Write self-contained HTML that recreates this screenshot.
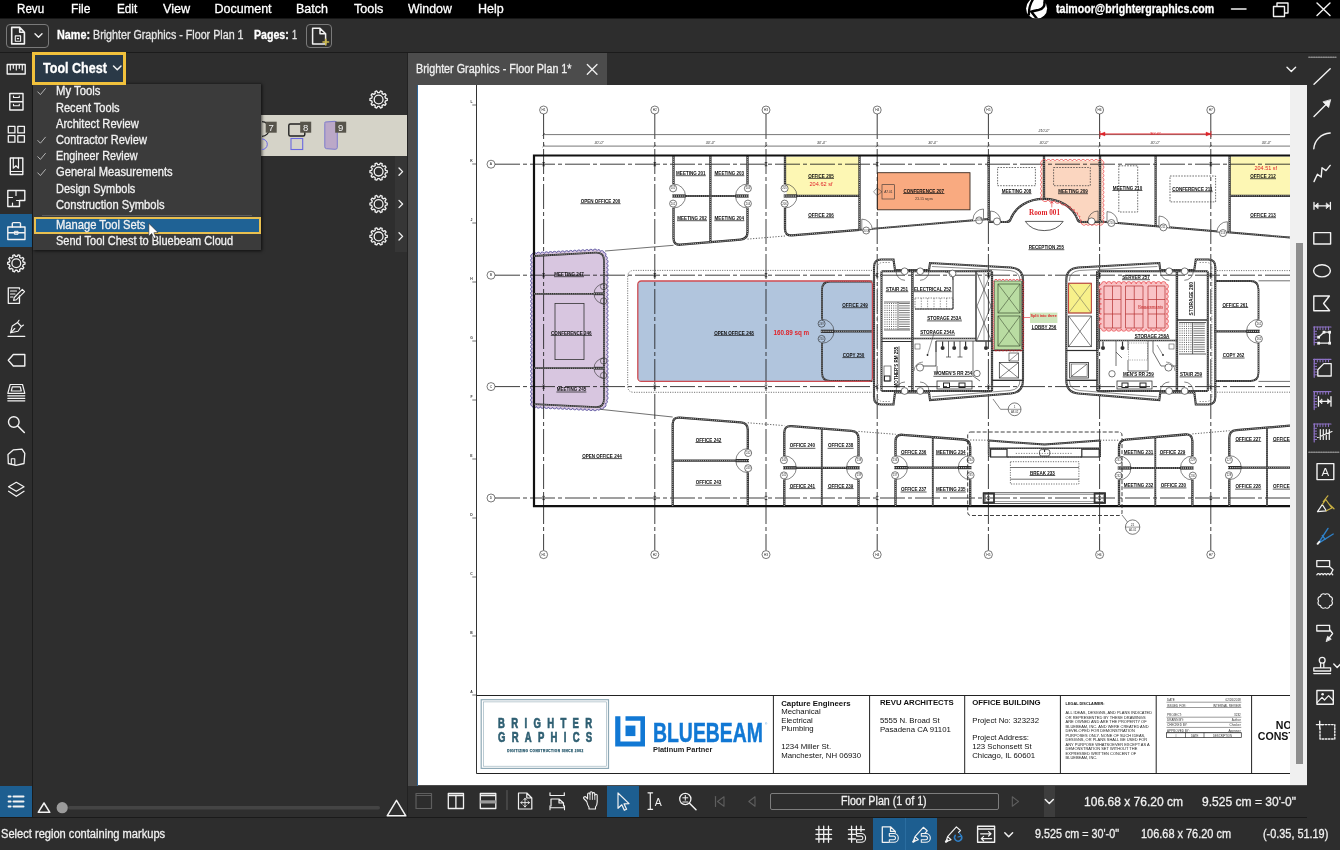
<!DOCTYPE html>
<html lang="en"><head><meta charset="utf-8"><title>Bluebeam Revu - Brighter Graphics - Floor Plan 1</title>
<style>
html,body{margin:0;padding:0;background:#2d2d2d}
body{width:1340px;height:850px;position:relative;overflow:hidden;font-family:"Liberation Sans",sans-serif}
.abs{position:absolute;box-sizing:content-box}
.t{position:absolute;white-space:nowrap;transform-origin:0 50%;-webkit-text-stroke:0.3px currentColor}
svg{position:absolute;left:0;top:0;overflow:visible}
svg text{font-family:"Liberation Sans",sans-serif}
svg text.serif{font-family:"Liberation Serif",serif}
#app{position:absolute;left:0;top:0;width:1340px;height:850px;will-change:transform}
</style></head><body>
<div id="app">
<div id="menubar" class="abs" style="left:0;top:0;width:1340px;height:18px;background:#000"></div>
<div class="abs" style="left:0;top:18px;width:1340px;height:1px;background:#171717"></div>
<div id="toolbar" class="abs" style="left:0;top:19px;width:1340px;height:33px;background:#2d2d2d"></div>
<div class="abs" style="left:0;top:52px;width:1340px;height:1px;background:#1b1b1b"></div>
<div id="leftstrip" class="abs" style="left:0;top:53px;width:32px;height:765px;background:#2d2d2d"></div>
<div class="abs" style="left:32px;top:53px;width:1px;height:765px;background:#1c1c1c"></div>
<div class="abs" style="left:0;top:214px;width:32px;height:33px;background:#1d5e90"></div>
<div class="abs" style="left:0;top:786px;width:32px;height:32px;background:#1d5e90"></div>
<div id="panel" class="abs" style="left:33px;top:53px;width:375px;height:765px;background:#2e2e2e"></div>
<div class="abs" style="left:395px;top:156px;width:12px;height:96px;background:#363636"></div>
<div class="abs" style="left:33px;top:115px;width:374px;height:41px;background:#d5d3c8"></div>
<div class="abs" style="left:407px;top:53px;width:1px;height:765px;background:#222"></div>
<div id="tabbar" class="abs" style="left:408px;top:53px;width:899px;height:32px;background:#2d2d2d"></div>
<div id="tab" class="abs" style="left:408px;top:53px;width:199px;height:32px;background:#4c4c4c"></div>
<div id="docbg" class="abs" style="left:408px;top:85px;width:899px;height:701px;background:#4c4c4c"></div>
<div id="page" class="abs" style="left:418px;top:85px;width:872px;height:700px;background:#fff"></div>
<div class="abs" style="left:416.5px;top:85px;width:1.5px;height:701px;background:#2f6698"></div>
<div id="vscroll" class="abs" style="left:1290px;top:85px;width:17px;height:700px;background:#f0f0f0"></div>
<div class="abs" style="left:1296px;top:243px;width:7px;height:521px;background:#8e8e8e"></div>
<div id="righttools" class="abs" style="left:1307px;top:53px;width:33px;height:765px;background:#2d2d2d"></div>
<div id="navbar" class="abs" style="left:408px;top:786px;width:899px;height:31px;background:#2d2d2d"></div>
<div class="abs" style="left:607px;top:786px;width:32px;height:31px;background:#1d5e90"></div>
<div class="abs" style="left:1044px;top:786px;width:11px;height:31px;background:#3d3d3d"></div>
<div class="abs" style="left:0;top:817px;width:1307px;height:1px;background:#1a1a1a"></div>
<div id="statusbar" class="abs" style="left:0;top:818px;width:1340px;height:32px;background:#2d2d2d"></div>
<div class="abs" style="left:873px;top:818px;width:64px;height:32px;background:#1d5e90"></div>
<div class="abs" style="left:905px;top:818px;width:1px;height:32px;background:#2a6da0"></div>
<div class="abs" style="left:770px;top:793px;width:227px;height:15px;border:1px solid #7d7d7d;border-radius:2px"></div>
<div id="menu-items">
<span class="t " style="left:16.7px;top:1.0px;font-size:12.5px;line-height:16px;color:#fff;transform:scaleX(0.929);">Revu</span>
<span class="t " style="left:70.6px;top:1.0px;font-size:12.5px;line-height:16px;color:#fff;transform:scaleX(0.963);">File</span>
<span class="t " style="left:116.8px;top:1.0px;font-size:12.5px;line-height:16px;color:#fff;transform:scaleX(0.938);">Edit</span>
<span class="t " style="left:163.0px;top:1.0px;font-size:12.5px;line-height:16px;color:#fff;transform:scaleX(1.009);">View</span>
<span class="t " style="left:214.6px;top:1.0px;font-size:12.5px;line-height:16px;color:#fff;">Document</span>
<span class="t " style="left:296.0px;top:1.0px;font-size:12.5px;line-height:16px;color:#fff;">Batch</span>
<span class="t " style="left:354.0px;top:1.0px;font-size:12.5px;line-height:16px;color:#fff;transform:scaleX(1.007);">Tools</span>
<span class="t " style="left:408.2px;top:1.0px;font-size:12.5px;line-height:16px;color:#fff;transform:scaleX(0.985);">Window</span>
<span class="t " style="left:478.0px;top:1.0px;font-size:12.5px;line-height:16px;color:#fff;">Help</span>
<span class="t " style="left:1056.3px;top:1.0px;font-size:12px;line-height:16px;color:#fff;font-weight:700;transform:scaleX(0.883);">taimoor@brightergraphics.com</span>
</div>
<div id="toolbar-items">
<span class="t " style="left:57.4px;top:27.3px;font-size:12px;line-height:16px;color:#fff;font-weight:700;transform:scaleX(0.900);">Name:</span>
<span class="t " style="left:93.2px;top:27.3px;font-size:12px;line-height:16px;color:#e6e6e6;transform:scaleX(0.892);">Brighter Graphics - Floor Plan 1</span>
<span class="t " style="left:254.3px;top:27.3px;font-size:12px;line-height:16px;color:#fff;font-weight:700;transform:scaleX(0.882);">Pages:</span>
<span class="t " style="left:291.8px;top:27.3px;font-size:12px;line-height:16px;color:#e6e6e6;transform:scaleX(0.764);">1</span>
<div class="abs" style="left:6px;top:23.5px;width:40.5px;height:22.5px;border:1px solid #7a7a7a;border-radius:4px"></div>
<div class="abs" style="left:306px;top:23.5px;width:23.5px;height:22.5px;border:1px solid #7a7a7a;border-radius:4px"></div>
</div>
<div id="toolchest-header" class="abs" style="z-index:2;left:32px;top:52px;width:88px;height:27px;border:3px solid #f1c13c;background:#2a3947"></div>
<span class="t " style="z-index:3;left:43.3px;top:59.0px;font-size:14px;line-height:18px;color:#fff;font-weight:700;transform:scaleX(0.896);">Tool Chest</span>
<div id="dropdown" class="abs" style="left:33px;top:83px;width:228px;height:166px;border-top:1px solid #222;background:#3b3b3b;box-shadow:1px 1px 3px rgba(0,0,0,.7)"></div>
<div class="abs" style="left:42px;top:215px;width:210px;height:1px;background:#5c5c5c"></div>
<div class="abs" style="left:34px;top:217px;width:223px;height:12.5px;border:2px solid #e9c050;background:#1f6295"></div>
<span class="t " style="left:56.4px;top:83.4px;font-size:12px;line-height:16px;color:#f2f2f2;transform:scaleX(0.944);">My Tools</span>
<span class="t " style="left:56.4px;top:99.6px;font-size:12px;line-height:16px;color:#f2f2f2;transform:scaleX(0.920);">Recent Tools</span>
<span class="t " style="left:56.4px;top:115.8px;font-size:12px;line-height:16px;color:#f2f2f2;transform:scaleX(0.927);">Architect Review</span>
<span class="t " style="left:56.4px;top:132.0px;font-size:12px;line-height:16px;color:#f2f2f2;transform:scaleX(0.921);">Contractor Review</span>
<span class="t " style="left:56.4px;top:148.2px;font-size:12px;line-height:16px;color:#f2f2f2;transform:scaleX(0.899);">Engineer Review</span>
<span class="t " style="left:56.4px;top:164.4px;font-size:12px;line-height:16px;color:#f2f2f2;transform:scaleX(0.930);">General Measurements</span>
<span class="t " style="left:56.4px;top:180.6px;font-size:12px;line-height:16px;color:#f2f2f2;transform:scaleX(0.915);">Design Symbols</span>
<span class="t " style="left:56.4px;top:196.6px;font-size:12px;line-height:16px;color:#f2f2f2;transform:scaleX(0.930);">Construction Symbols</span>
<span class="t " style="left:56.4px;top:216.6px;font-size:12px;line-height:16px;color:#f2f2f2;transform:scaleX(0.933);">Manage Tool Sets</span>
<span class="t " style="left:56.4px;top:232.8px;font-size:12px;line-height:16px;color:#f2f2f2;transform:scaleX(0.916);">Send Tool Chest to Bluebeam Cloud</span>
<span class="t " style="left:416.0px;top:61.3px;font-size:12px;line-height:16px;color:#f0f0f0;transform:scaleX(0.897);">Brighter Graphics - Floor Plan 1*</span>
<span class="t " style="left:840.9px;top:793.3px;font-size:12px;line-height:16px;color:#f0f0f0;transform:scaleX(0.892);">Floor Plan (1 of 1)</span>
<span class="t " style="left:1083.8px;top:792.8px;font-size:13px;line-height:17px;color:#f0f0f0;transform:scaleX(0.927);">106.68 x 76.20 cm</span>
<span class="t " style="left:1202.0px;top:792.8px;font-size:13px;line-height:17px;color:#f0f0f0;transform:scaleX(0.927);">9.525 cm = 30'-0"</span>
<span class="t " style="left:1.0px;top:826.0px;font-size:12px;line-height:16px;color:#f0f0f0;transform:scaleX(0.925);">Select region containing markups</span>
<span class="t " style="left:1035.0px;top:826.0px;font-size:12px;line-height:16px;color:#f0f0f0;transform:scaleX(0.897);">9.525 cm = 30'-0"</span>
<span class="t " style="left:1141.0px;top:826.0px;font-size:12px;line-height:16px;color:#f0f0f0;transform:scaleX(0.912);">106.68 x 76.20 cm</span>
<span class="t " style="left:1262.7px;top:826.0px;font-size:12px;line-height:16px;color:#f0f0f0;transform:scaleX(0.906);">(-0.35, 51.19)</span>
<svg id="floorplan" width="1340" height="850" viewBox="0 0 1340 850">
<defs><clipPath id="pageclip"><rect x="418" y="85" width="872" height="700"/></clipPath></defs>
<g clip-path="url(#pageclip)">
<g id="fills">
<path d="M532.3,254.2 L597,250.6 Q606.4,250.4 606.4,259.5 L606.4,400 Q606.4,409.4 597,409.2 L532.3,406.2 Z" fill="#d8c6e0" stroke="none" stroke-width="0" />
<path d="M532.30,254.20 A2.07,2.07 0 0 1 536.34,253.97 A2.07,2.07 0 0 1 540.39,253.75 A2.07,2.07 0 0 1 544.43,253.52 A2.07,2.07 0 0 1 548.47,253.30 A2.07,2.07 0 0 1 552.52,253.07 A2.07,2.07 0 0 1 556.56,252.85 A2.07,2.07 0 0 1 560.61,252.62 A2.07,2.07 0 0 1 564.65,252.40 A2.07,2.07 0 0 1 568.69,252.17 A2.07,2.07 0 0 1 572.74,251.95 A2.07,2.07 0 0 1 576.78,251.72 A2.07,2.07 0 0 1 580.83,251.50 A2.07,2.07 0 0 1 584.87,251.28 A2.07,2.07 0 0 1 588.91,251.05 A2.07,2.07 0 0 1 592.96,250.82 A2.07,2.07 0 0 1 597.00,250.60 A1.81,1.81 0 0 1 600.40,251.60 A1.81,1.81 0 0 1 603.80,252.60 A1.88,1.88 0 0 1 605.10,256.05 A1.88,1.88 0 0 1 606.40,259.50 A2.11,2.11 0 0 1 606.40,263.63 A2.11,2.11 0 0 1 606.40,267.76 A2.11,2.11 0 0 1 606.40,271.90 A2.11,2.11 0 0 1 606.40,276.03 A2.11,2.11 0 0 1 606.40,280.16 A2.11,2.11 0 0 1 606.40,284.29 A2.11,2.11 0 0 1 606.40,288.43 A2.11,2.11 0 0 1 606.40,292.56 A2.11,2.11 0 0 1 606.40,296.69 A2.11,2.11 0 0 1 606.40,300.82 A2.11,2.11 0 0 1 606.40,304.96 A2.11,2.11 0 0 1 606.40,309.09 A2.11,2.11 0 0 1 606.40,313.22 A2.11,2.11 0 0 1 606.40,317.35 A2.11,2.11 0 0 1 606.40,321.49 A2.11,2.11 0 0 1 606.40,325.62 A2.11,2.11 0 0 1 606.40,329.75 A2.11,2.11 0 0 1 606.40,333.88 A2.11,2.11 0 0 1 606.40,338.01 A2.11,2.11 0 0 1 606.40,342.15 A2.11,2.11 0 0 1 606.40,346.28 A2.11,2.11 0 0 1 606.40,350.41 A2.11,2.11 0 0 1 606.40,354.54 A2.11,2.11 0 0 1 606.40,358.68 A2.11,2.11 0 0 1 606.40,362.81 A2.11,2.11 0 0 1 606.40,366.94 A2.11,2.11 0 0 1 606.40,371.07 A2.11,2.11 0 0 1 606.40,375.21 A2.11,2.11 0 0 1 606.40,379.34 A2.11,2.11 0 0 1 606.40,383.47 A2.11,2.11 0 0 1 606.40,387.60 A2.11,2.11 0 0 1 606.40,391.74 A2.11,2.11 0 0 1 606.40,395.87 A2.11,2.11 0 0 1 606.40,400.00 A1.95,1.95 0 0 1 605.10,403.60 A1.95,1.95 0 0 1 603.80,407.20 A1.81,1.81 0 0 1 600.40,408.20 A1.81,1.81 0 0 1 597.00,409.20 A2.06,2.06 0 0 1 592.96,409.01 A2.06,2.06 0 0 1 588.91,408.82 A2.06,2.06 0 0 1 584.87,408.64 A2.06,2.06 0 0 1 580.83,408.45 A2.06,2.06 0 0 1 576.78,408.26 A2.06,2.06 0 0 1 572.74,408.07 A2.06,2.06 0 0 1 568.69,407.89 A2.06,2.06 0 0 1 564.65,407.70 A2.06,2.06 0 0 1 560.61,407.51 A2.06,2.06 0 0 1 556.56,407.32 A2.06,2.06 0 0 1 552.52,407.14 A2.06,2.06 0 0 1 548.47,406.95 A2.06,2.06 0 0 1 544.43,406.76 A2.06,2.06 0 0 1 540.39,406.57 A2.06,2.06 0 0 1 536.34,406.39 A2.06,2.06 0 0 1 532.30,406.20 A2.10,2.10 0 0 1 532.30,402.09 A2.10,2.10 0 0 1 532.30,397.98 A2.10,2.10 0 0 1 532.30,393.88 A2.10,2.10 0 0 1 532.30,389.77 A2.10,2.10 0 0 1 532.30,385.66 A2.10,2.10 0 0 1 532.30,381.55 A2.10,2.10 0 0 1 532.30,377.44 A2.10,2.10 0 0 1 532.30,373.34 A2.10,2.10 0 0 1 532.30,369.23 A2.10,2.10 0 0 1 532.30,365.12 A2.10,2.10 0 0 1 532.30,361.01 A2.10,2.10 0 0 1 532.30,356.90 A2.10,2.10 0 0 1 532.30,352.79 A2.10,2.10 0 0 1 532.30,348.69 A2.10,2.10 0 0 1 532.30,344.58 A2.10,2.10 0 0 1 532.30,340.47 A2.10,2.10 0 0 1 532.30,336.36 A2.10,2.10 0 0 1 532.30,332.25 A2.10,2.10 0 0 1 532.30,328.15 A2.10,2.10 0 0 1 532.30,324.04 A2.10,2.10 0 0 1 532.30,319.93 A2.10,2.10 0 0 1 532.30,315.82 A2.10,2.10 0 0 1 532.30,311.71 A2.10,2.10 0 0 1 532.30,307.61 A2.10,2.10 0 0 1 532.30,303.50 A2.10,2.10 0 0 1 532.30,299.39 A2.10,2.10 0 0 1 532.30,295.28 A2.10,2.10 0 0 1 532.30,291.17 A2.10,2.10 0 0 1 532.30,287.06 A2.10,2.10 0 0 1 532.30,282.96 A2.10,2.10 0 0 1 532.30,278.85 A2.10,2.10 0 0 1 532.30,274.74 A2.10,2.10 0 0 1 532.30,270.63 A2.10,2.10 0 0 1 532.30,266.52 A2.10,2.10 0 0 1 532.30,262.42 A2.10,2.10 0 0 1 532.30,258.31 A2.10,2.10 0 0 1 532.30,254.20Z" fill="#d8c6e0" stroke="#6a62a8" stroke-width="1.0" stroke-linejoin="round"/>
<rect x="638" y="281.2" width="234.3" height="100" rx="4" fill="#b1c5dd" stroke="none"/>
<rect x="785.5" y="156.6" width="73.5" height="38.7" fill="#fdf7b4" stroke="none" stroke-width="0" />
<rect x="1230.0" y="156.6" width="60.0" height="38.7" fill="#fdf7b4" stroke="none" stroke-width="0" />
<rect x="877.5" y="172.7" width="92.5" height="37.1" fill="#f9aa80" stroke="none" stroke-width="0" />
<path d="M1042,160.8 L1102.6,160.8 L1102.6,224 L1082,224 C1079,210 1064,199.5 1042,199.5 Z" fill="#fbd6c0" stroke="none" stroke-width="0" />
<rect x="994.6" y="281.0" width="26.9" height="68.3" fill="#b9dca2" stroke="none" stroke-width="0" />
<rect x="1030.0" y="312.6" width="27.4" height="10.4" fill="#cfe6bd" stroke="none" stroke-width="0" />
<rect x="1068.6" y="283.2" width="22.7" height="29.8" fill="#f7f08a" stroke="none" stroke-width="0" />
<path d="M1101.50,284.00 A2.48,2.48 0 0 1 1106.46,284.00 A2.48,2.48 0 0 1 1111.42,284.00 A2.48,2.48 0 0 1 1116.38,284.00 A2.48,2.48 0 0 1 1121.35,284.00 A2.48,2.48 0 0 1 1126.31,284.00 A2.48,2.48 0 0 1 1131.27,284.00 A2.48,2.48 0 0 1 1136.23,284.00 A2.48,2.48 0 0 1 1141.19,284.00 A2.48,2.48 0 0 1 1146.15,284.00 A2.48,2.48 0 0 1 1151.12,284.00 A2.48,2.48 0 0 1 1156.08,284.00 A2.48,2.48 0 0 1 1161.04,284.00 A2.48,2.48 0 0 1 1166.00,284.00 A2.49,2.49 0 0 1 1166.00,288.98 A2.49,2.49 0 0 1 1166.00,293.96 A2.49,2.49 0 0 1 1166.00,298.93 A2.49,2.49 0 0 1 1166.00,303.91 A2.49,2.49 0 0 1 1166.00,308.89 A2.49,2.49 0 0 1 1166.00,313.87 A2.49,2.49 0 0 1 1166.00,318.84 A2.49,2.49 0 0 1 1166.00,323.82 A2.49,2.49 0 0 1 1166.00,328.80 A2.48,2.48 0 0 1 1161.04,328.80 A2.48,2.48 0 0 1 1156.08,328.80 A2.48,2.48 0 0 1 1151.12,328.80 A2.48,2.48 0 0 1 1146.15,328.80 A2.48,2.48 0 0 1 1141.19,328.80 A2.48,2.48 0 0 1 1136.23,328.80 A2.48,2.48 0 0 1 1131.27,328.80 A2.48,2.48 0 0 1 1126.31,328.80 A2.48,2.48 0 0 1 1121.35,328.80 A2.48,2.48 0 0 1 1116.38,328.80 A2.48,2.48 0 0 1 1111.42,328.80 A2.48,2.48 0 0 1 1106.46,328.80 A2.48,2.48 0 0 1 1101.50,328.80 A2.49,2.49 0 0 1 1101.50,323.82 A2.49,2.49 0 0 1 1101.50,318.84 A2.49,2.49 0 0 1 1101.50,313.87 A2.49,2.49 0 0 1 1101.50,308.89 A2.49,2.49 0 0 1 1101.50,303.91 A2.49,2.49 0 0 1 1101.50,298.93 A2.49,2.49 0 0 1 1101.50,293.96 A2.49,2.49 0 0 1 1101.50,288.98 A2.49,2.49 0 0 1 1101.50,284.00Z" fill="#f9c3c6" stroke="none" stroke-width="0" stroke-linejoin="round"/>
</g>
<g id="grid">
<line x1="543.6" y1="114.0" x2="543.6" y2="550.5" stroke="#1c1c1c" stroke-width="0.85" stroke-dasharray="25 3 4 3"/>
<circle cx="543.6" cy="110.0" r="4" fill="#fff" stroke="#222" stroke-width="0.6"/><circle cx="543.6" cy="554.6" r="4" fill="#fff" stroke="#222" stroke-width="0.6"/>
<text x="543.6" y="111.1" font-size="3.2" text-anchor="middle" fill="#222">H1</text>
<text x="543.6" y="555.7" font-size="3.2" text-anchor="middle" fill="#222">H1</text>
<line x1="654.8" y1="114.0" x2="654.8" y2="550.5" stroke="#1c1c1c" stroke-width="0.85" stroke-dasharray="25 3 4 3"/>
<circle cx="654.8" cy="110.0" r="4" fill="#fff" stroke="#222" stroke-width="0.6"/><circle cx="654.8" cy="554.6" r="4" fill="#fff" stroke="#222" stroke-width="0.6"/>
<text x="654.8" y="111.1" font-size="3.2" text-anchor="middle" fill="#222">H2</text>
<text x="654.8" y="555.7" font-size="3.2" text-anchor="middle" fill="#222">H2</text>
<line x1="766.0" y1="114.0" x2="766.0" y2="550.5" stroke="#1c1c1c" stroke-width="0.85" stroke-dasharray="25 3 4 3"/>
<circle cx="766.0" cy="110.0" r="4" fill="#fff" stroke="#222" stroke-width="0.6"/><circle cx="766.0" cy="554.6" r="4" fill="#fff" stroke="#222" stroke-width="0.6"/>
<text x="766.0" y="111.1" font-size="3.2" text-anchor="middle" fill="#222">H3</text>
<text x="766.0" y="555.7" font-size="3.2" text-anchor="middle" fill="#222">H3</text>
<line x1="877.2" y1="114.0" x2="877.2" y2="550.5" stroke="#1c1c1c" stroke-width="0.85" stroke-dasharray="25 3 4 3"/>
<circle cx="877.2" cy="110.0" r="4" fill="#fff" stroke="#222" stroke-width="0.6"/><circle cx="877.2" cy="554.6" r="4" fill="#fff" stroke="#222" stroke-width="0.6"/>
<text x="877.2" y="111.1" font-size="3.2" text-anchor="middle" fill="#222">H4</text>
<text x="877.2" y="555.7" font-size="3.2" text-anchor="middle" fill="#222">H4</text>
<line x1="988.4" y1="114.0" x2="988.4" y2="550.5" stroke="#1c1c1c" stroke-width="0.85" stroke-dasharray="25 3 4 3"/>
<circle cx="988.4" cy="110.0" r="4" fill="#fff" stroke="#222" stroke-width="0.6"/><circle cx="988.4" cy="554.6" r="4" fill="#fff" stroke="#222" stroke-width="0.6"/>
<text x="988.4" y="111.1" font-size="3.2" text-anchor="middle" fill="#222">H5</text>
<text x="988.4" y="555.7" font-size="3.2" text-anchor="middle" fill="#222">H5</text>
<line x1="1099.6" y1="114.0" x2="1099.6" y2="550.5" stroke="#1c1c1c" stroke-width="0.85" stroke-dasharray="25 3 4 3"/>
<circle cx="1099.6" cy="110.0" r="4" fill="#fff" stroke="#222" stroke-width="0.6"/><circle cx="1099.6" cy="554.6" r="4" fill="#fff" stroke="#222" stroke-width="0.6"/>
<text x="1099.6" y="111.1" font-size="3.2" text-anchor="middle" fill="#222">H6</text>
<text x="1099.6" y="555.7" font-size="3.2" text-anchor="middle" fill="#222">H6</text>
<line x1="1210.8" y1="114.0" x2="1210.8" y2="550.5" stroke="#1c1c1c" stroke-width="0.85" stroke-dasharray="25 3 4 3"/>
<circle cx="1210.8" cy="110.0" r="4" fill="#fff" stroke="#222" stroke-width="0.6"/><circle cx="1210.8" cy="554.6" r="4" fill="#fff" stroke="#222" stroke-width="0.6"/>
<text x="1210.8" y="111.1" font-size="3.2" text-anchor="middle" fill="#222">H7</text>
<text x="1210.8" y="555.7" font-size="3.2" text-anchor="middle" fill="#222">H7</text>
<line x1="495.0" y1="164.2" x2="1290.0" y2="164.2" stroke="#1c1c1c" stroke-width="0.85" stroke-dasharray="25 3 4 3"/>
<circle cx="491.0" cy="164.2" r="4" fill="#fff" stroke="#222" stroke-width="0.6"/>
<text x="491" y="165.4" font-size="3.4" text-anchor="middle" fill="#222">A</text>
<line x1="495.0" y1="275.2" x2="1290.0" y2="275.2" stroke="#1c1c1c" stroke-width="0.85" stroke-dasharray="25 3 4 3"/>
<circle cx="491.0" cy="275.2" r="4" fill="#fff" stroke="#222" stroke-width="0.6"/>
<text x="491" y="276.4" font-size="3.4" text-anchor="middle" fill="#222">B</text>
<line x1="495.0" y1="386.6" x2="1290.0" y2="386.6" stroke="#1c1c1c" stroke-width="0.85" stroke-dasharray="25 3 4 3"/>
<circle cx="491.0" cy="386.6" r="4" fill="#fff" stroke="#222" stroke-width="0.6"/>
<text x="491" y="387.8" font-size="3.4" text-anchor="middle" fill="#222">C</text>
<line x1="495.0" y1="498.0" x2="1290.0" y2="498.0" stroke="#1c1c1c" stroke-width="0.85" stroke-dasharray="25 3 4 3"/>
<circle cx="491.0" cy="498.0" r="4" fill="#fff" stroke="#222" stroke-width="0.6"/>
<text x="491" y="499.2" font-size="3.4" text-anchor="middle" fill="#222">D</text>
<path d="M542.3000000000001,162.6 h2.6 M542.3000000000001,165.79999999999998 h2.6 M543.6,162.6 v3.2" fill="none" stroke="#111" stroke-width="0.7" />
<path d="M542.3000000000001,273.59999999999997 h2.6 M542.3000000000001,276.8 h2.6 M543.6,273.59999999999997 v3.2" fill="none" stroke="#111" stroke-width="0.7" />
<path d="M542.3000000000001,385.0 h2.6 M542.3000000000001,388.20000000000005 h2.6 M543.6,385.0 v3.2" fill="none" stroke="#111" stroke-width="0.7" />
<path d="M542.3000000000001,496.4 h2.6 M542.3000000000001,499.6 h2.6 M543.6,496.4 v3.2" fill="none" stroke="#111" stroke-width="0.7" />
<path d="M653.5000000000001,162.6 h2.6 M653.5000000000001,165.79999999999998 h2.6 M654.8000000000001,162.6 v3.2" fill="none" stroke="#111" stroke-width="0.7" />
<path d="M653.5000000000001,273.59999999999997 h2.6 M653.5000000000001,276.8 h2.6 M654.8000000000001,273.59999999999997 v3.2" fill="none" stroke="#111" stroke-width="0.7" />
<path d="M653.5000000000001,385.0 h2.6 M653.5000000000001,388.20000000000005 h2.6 M654.8000000000001,385.0 v3.2" fill="none" stroke="#111" stroke-width="0.7" />
<path d="M653.5000000000001,496.4 h2.6 M653.5000000000001,499.6 h2.6 M654.8000000000001,496.4 v3.2" fill="none" stroke="#111" stroke-width="0.7" />
<path d="M764.7,162.6 h2.6 M764.7,165.79999999999998 h2.6 M766.0,162.6 v3.2" fill="none" stroke="#111" stroke-width="0.7" />
<path d="M764.7,273.59999999999997 h2.6 M764.7,276.8 h2.6 M766.0,273.59999999999997 v3.2" fill="none" stroke="#111" stroke-width="0.7" />
<path d="M764.7,385.0 h2.6 M764.7,388.20000000000005 h2.6 M766.0,385.0 v3.2" fill="none" stroke="#111" stroke-width="0.7" />
<path d="M764.7,496.4 h2.6 M764.7,499.6 h2.6 M766.0,496.4 v3.2" fill="none" stroke="#111" stroke-width="0.7" />
<path d="M875.9000000000001,162.6 h2.6 M875.9000000000001,165.79999999999998 h2.6 M877.2,162.6 v3.2" fill="none" stroke="#111" stroke-width="0.7" />
<path d="M875.9000000000001,273.59999999999997 h2.6 M875.9000000000001,276.8 h2.6 M877.2,273.59999999999997 v3.2" fill="none" stroke="#111" stroke-width="0.7" />
<path d="M875.9000000000001,385.0 h2.6 M875.9000000000001,388.20000000000005 h2.6 M877.2,385.0 v3.2" fill="none" stroke="#111" stroke-width="0.7" />
<path d="M875.9000000000001,496.4 h2.6 M875.9000000000001,499.6 h2.6 M877.2,496.4 v3.2" fill="none" stroke="#111" stroke-width="0.7" />
<path d="M987.1000000000001,162.6 h2.6 M987.1000000000001,165.79999999999998 h2.6 M988.4000000000001,162.6 v3.2" fill="none" stroke="#111" stroke-width="0.7" />
<path d="M987.1000000000001,273.59999999999997 h2.6 M987.1000000000001,276.8 h2.6 M988.4000000000001,273.59999999999997 v3.2" fill="none" stroke="#111" stroke-width="0.7" />
<path d="M987.1000000000001,385.0 h2.6 M987.1000000000001,388.20000000000005 h2.6 M988.4000000000001,385.0 v3.2" fill="none" stroke="#111" stroke-width="0.7" />
<path d="M987.1000000000001,496.4 h2.6 M987.1000000000001,499.6 h2.6 M988.4000000000001,496.4 v3.2" fill="none" stroke="#111" stroke-width="0.7" />
<path d="M1098.3,162.6 h2.6 M1098.3,165.79999999999998 h2.6 M1099.6,162.6 v3.2" fill="none" stroke="#111" stroke-width="0.7" />
<path d="M1098.3,273.59999999999997 h2.6 M1098.3,276.8 h2.6 M1099.6,273.59999999999997 v3.2" fill="none" stroke="#111" stroke-width="0.7" />
<path d="M1098.3,385.0 h2.6 M1098.3,388.20000000000005 h2.6 M1099.6,385.0 v3.2" fill="none" stroke="#111" stroke-width="0.7" />
<path d="M1098.3,496.4 h2.6 M1098.3,499.6 h2.6 M1099.6,496.4 v3.2" fill="none" stroke="#111" stroke-width="0.7" />
<path d="M1209.5000000000002,162.6 h2.6 M1209.5000000000002,165.79999999999998 h2.6 M1210.8000000000002,162.6 v3.2" fill="none" stroke="#111" stroke-width="0.7" />
<path d="M1209.5000000000002,273.59999999999997 h2.6 M1209.5000000000002,276.8 h2.6 M1210.8000000000002,273.59999999999997 v3.2" fill="none" stroke="#111" stroke-width="0.7" />
<path d="M1209.5000000000002,385.0 h2.6 M1209.5000000000002,388.20000000000005 h2.6 M1210.8000000000002,385.0 v3.2" fill="none" stroke="#111" stroke-width="0.7" />
<path d="M1209.5000000000002,496.4 h2.6 M1209.5000000000002,499.6 h2.6 M1210.8000000000002,496.4 v3.2" fill="none" stroke="#111" stroke-width="0.7" />
<line x1="543.6" y1="134.6" x2="1290.0" y2="134.6" stroke="#555" stroke-width="0.8" />
<line x1="543.6" y1="146.1" x2="1290.0" y2="146.1" stroke="#555" stroke-width="0.8" />
<path d="M542.4,147.2 l2.4,-2.4" fill="none" stroke="#222" stroke-width="0.6" />
<text x="599.2" y="143.6" font-size="3.6" font-style="italic" text-anchor="middle" fill="#333">30'-0"</text>
<path d="M653.6,147.2 l2.4,-2.4" fill="none" stroke="#222" stroke-width="0.6" />
<text x="710.4" y="143.6" font-size="3.6" font-style="italic" text-anchor="middle" fill="#333">30'-0"</text>
<path d="M764.8,147.2 l2.4,-2.4" fill="none" stroke="#222" stroke-width="0.6" />
<text x="821.6" y="143.6" font-size="3.6" font-style="italic" text-anchor="middle" fill="#333">30'-0"</text>
<path d="M876.0,147.2 l2.4,-2.4" fill="none" stroke="#222" stroke-width="0.6" />
<text x="932.8" y="143.6" font-size="3.6" font-style="italic" text-anchor="middle" fill="#333">30'-0"</text>
<path d="M987.2,147.2 l2.4,-2.4" fill="none" stroke="#222" stroke-width="0.6" />
<text x="1044.0" y="143.6" font-size="3.6" font-style="italic" text-anchor="middle" fill="#333">30'-0"</text>
<path d="M1098.3999999999999,147.2 l2.4,-2.4" fill="none" stroke="#222" stroke-width="0.6" />
<text x="1155.2" y="143.6" font-size="3.6" font-style="italic" text-anchor="middle" fill="#333">30'-0"</text>
<path d="M1209.6000000000001,147.2 l2.4,-2.4" fill="none" stroke="#222" stroke-width="0.6" />
<text x="1266.4" y="143.6" font-size="3.6" font-style="italic" text-anchor="middle" fill="#333">30'-0"</text>
<path d="M542.4,135.6 l2.4,-2.4" fill="none" stroke="#222" stroke-width="0.6" />
<text x="1044" y="132" font-size="3.6" font-style="italic" text-anchor="middle" fill="#333">210'-0"</text>
<line x1="476.5" y1="85.0" x2="476.5" y2="773.5" stroke="#333" stroke-width="1" />
<line x1="472.3" y1="105.0" x2="476.5" y2="105.0" stroke="#333" stroke-width="0.7" />
<text x="471.5" y="102.5" font-size="3.4" text-anchor="middle" fill="#333" font-weight="700">L</text>
<line x1="472.3" y1="164.0" x2="476.5" y2="164.0" stroke="#333" stroke-width="0.7" />
<text x="471.5" y="161.5" font-size="3.4" text-anchor="middle" fill="#333" font-weight="700">K</text>
<line x1="472.3" y1="223.0" x2="476.5" y2="223.0" stroke="#333" stroke-width="0.7" />
<text x="471.5" y="220.5" font-size="3.4" text-anchor="middle" fill="#333" font-weight="700">J</text>
<line x1="472.3" y1="282.0" x2="476.5" y2="282.0" stroke="#333" stroke-width="0.7" />
<text x="471.5" y="279.5" font-size="3.4" text-anchor="middle" fill="#333" font-weight="700">H</text>
<line x1="472.3" y1="341.0" x2="476.5" y2="341.0" stroke="#333" stroke-width="0.7" />
<text x="471.5" y="338.5" font-size="3.4" text-anchor="middle" fill="#333" font-weight="700">G</text>
<line x1="472.3" y1="400.0" x2="476.5" y2="400.0" stroke="#333" stroke-width="0.7" />
<text x="471.5" y="397.5" font-size="3.4" text-anchor="middle" fill="#333" font-weight="700">F</text>
<line x1="472.3" y1="459.0" x2="476.5" y2="459.0" stroke="#333" stroke-width="0.7" />
<text x="471.5" y="456.5" font-size="3.4" text-anchor="middle" fill="#333" font-weight="700">E</text>
<line x1="472.3" y1="518.0" x2="476.5" y2="518.0" stroke="#333" stroke-width="0.7" />
<text x="471.5" y="515.5" font-size="3.4" text-anchor="middle" fill="#333" font-weight="700">D</text>
<line x1="472.3" y1="577.0" x2="476.5" y2="577.0" stroke="#333" stroke-width="0.7" />
<text x="471.5" y="574.5" font-size="3.4" text-anchor="middle" fill="#333" font-weight="700">C</text>
<line x1="472.3" y1="636.0" x2="476.5" y2="636.0" stroke="#333" stroke-width="0.7" />
<text x="471.5" y="633.5" font-size="3.4" text-anchor="middle" fill="#333" font-weight="700">B</text>
<line x1="472.3" y1="695.0" x2="476.5" y2="695.0" stroke="#333" stroke-width="0.7" />
<text x="471.5" y="692.5" font-size="3.4" text-anchor="middle" fill="#333" font-weight="700">A</text>
</g>
<g id="rooms">
<line x1="605.0" y1="251.0" x2="673.5" y2="245.3" stroke="#333" stroke-width="0.7" />
<line x1="600.0" y1="409.3" x2="672.7" y2="417.0" stroke="#333" stroke-width="0.7" />
<line x1="747.5" y1="239.1" x2="785.0" y2="236.0" stroke="#333" stroke-width="0.8" stroke-dasharray="1.2 1.6"/>
<line x1="747.8" y1="422.8" x2="784.3" y2="425.6" stroke="#333" stroke-width="0.8" stroke-dasharray="1.2 1.6"/>
<line x1="858.5" y1="431.4" x2="895.7" y2="434.3" stroke="#333" stroke-width="0.8" stroke-dasharray="1.2 1.6"/>
<line x1="1192.4" y1="433.9" x2="1229.6" y2="430.7" stroke="#333" stroke-width="0.8" stroke-dasharray="1.2 1.6"/>
<path d="M673.5,155.5 V238.3 Q673.5,245.3 680.5,244.7 L740.5,239.7 Q747.5,239.1 747.5,232.1 V155.5" fill="none" stroke="#2e2e2e" stroke-width="2.3" /><path d="M673.5,155.5 V238.3 Q673.5,245.3 680.5,244.7 L740.5,239.7 Q747.5,239.1 747.5,232.1 V155.5" fill="none" stroke="#d0d0d0" stroke-dasharray="0.9 1" stroke-linecap="butt" stroke-width="0.92"/>
<line x1="710.4" y1="155.5" x2="710.4" y2="242.2" stroke="#2e2e2e" stroke-width="2.3" /><line x1="710.4" y1="155.5" x2="710.4" y2="242.2" stroke="#d0d0d0" stroke-dasharray="0.9 1" stroke-linecap="butt" stroke-width="0.92"/>
<line x1="673.5" y1="196.0" x2="747.5" y2="196.0" stroke="#2e2e2e" stroke-width="2.2" /><line x1="673.5" y1="196.0" x2="747.5" y2="196.0" stroke="#d0d0d0" stroke-dasharray="0.9 1" stroke-linecap="butt" stroke-width="0.88"/>
<line x1="673.5" y1="184.3" x2="673.5" y2="207.7" stroke="#fff" stroke-width="3.4" /><path d="M673.5,184.0 A12,12 0 0 1 685.5,196.0 A12,12 0 0 1 673.5,208.0" fill="none" stroke="#333" stroke-width="0.6" /><line x1="672.3" y1="196.0" x2="685.5" y2="196.0" stroke="#2e2e2e" stroke-width="3.2" /><line x1="672.3" y1="196.0" x2="685.5" y2="196.0" stroke="#d0d0d0" stroke-dasharray="0.9 1" stroke-linecap="butt" stroke-width="1.28"/><circle cx="673.1" cy="188.4" r="3.5" fill="#fff" stroke="#222" stroke-width="0.6"/><text x="673.1" y="189.3" font-size="2.7" text-anchor="middle" fill="#333">201</text><circle cx="673.1" cy="203.6" r="3.5" fill="#fff" stroke="#222" stroke-width="0.6"/><text x="673.1" y="204.5" font-size="2.7" text-anchor="middle" fill="#333">202</text><line x1="747.5" y1="184.3" x2="747.5" y2="207.7" stroke="#fff" stroke-width="3.4" /><path d="M747.5,184.0 A12,12 0 0 0 735.5,196.0 A12,12 0 0 0 747.5,208.0" fill="none" stroke="#333" stroke-width="0.6" /><line x1="748.7" y1="196.0" x2="735.5" y2="196.0" stroke="#2e2e2e" stroke-width="3.2" /><line x1="748.7" y1="196.0" x2="735.5" y2="196.0" stroke="#d0d0d0" stroke-dasharray="0.9 1" stroke-linecap="butt" stroke-width="1.28"/><circle cx="747.9" cy="188.4" r="3.5" fill="#fff" stroke="#222" stroke-width="0.6"/><text x="747.9" y="189.3" font-size="2.7" text-anchor="middle" fill="#333">203</text><circle cx="747.9" cy="203.6" r="3.5" fill="#fff" stroke="#222" stroke-width="0.6"/><text x="747.9" y="204.5" font-size="2.7" text-anchor="middle" fill="#333">204</text>
<path d="M785,155.5 V229.0 Q785,236.0 792,235.4 L859.5,229.8" fill="none" stroke="#2e2e2e" stroke-width="2.3" /><path d="M785,155.5 V229.0 Q785,236.0 792,235.4 L859.5,229.8" fill="none" stroke="#d0d0d0" stroke-dasharray="0.9 1" stroke-linecap="butt" stroke-width="0.92"/>
<line x1="859.5" y1="155.5" x2="859.5" y2="229.8" stroke="#2e2e2e" stroke-width="2.3" /><line x1="859.5" y1="155.5" x2="859.5" y2="229.8" stroke="#d0d0d0" stroke-dasharray="0.9 1" stroke-linecap="butt" stroke-width="0.92"/>
<line x1="785.0" y1="195.8" x2="859.5" y2="195.8" stroke="#2e2e2e" stroke-width="2.2" /><line x1="785.0" y1="195.8" x2="859.5" y2="195.8" stroke="#d0d0d0" stroke-dasharray="0.9 1" stroke-linecap="butt" stroke-width="0.88"/>
<line x1="785.0" y1="184.3" x2="785.0" y2="207.7" stroke="#fff" stroke-width="3.4" /><path d="M785.0,184.0 A12,12 0 0 1 797.0,196.0 A12,12 0 0 1 785.0,208.0" fill="none" stroke="#333" stroke-width="0.6" /><line x1="783.8" y1="196.0" x2="797.0" y2="196.0" stroke="#2e2e2e" stroke-width="3.2" /><line x1="783.8" y1="196.0" x2="797.0" y2="196.0" stroke="#d0d0d0" stroke-dasharray="0.9 1" stroke-linecap="butt" stroke-width="1.28"/><circle cx="784.6" cy="188.4" r="3.5" fill="#fff" stroke="#222" stroke-width="0.6"/><text x="784.6" y="189.3" font-size="2.7" text-anchor="middle" fill="#333">205</text><circle cx="784.6" cy="203.6" r="3.5" fill="#fff" stroke="#222" stroke-width="0.6"/><text x="784.6" y="204.5" font-size="2.7" text-anchor="middle" fill="#333">206</text>
<line x1="859.5" y1="229.8" x2="988.7" y2="219.0" stroke="#2e2e2e" stroke-width="1.8" /><line x1="859.5" y1="229.8" x2="988.7" y2="219.0" stroke="#d0d0d0" stroke-dasharray="0.9 1" stroke-linecap="butt" stroke-width="0.72"/>
<line x1="988.7" y1="155.5" x2="988.7" y2="221.0" stroke="#2e2e2e" stroke-width="2.3" /><line x1="988.7" y1="155.5" x2="988.7" y2="221.0" stroke="#d0d0d0" stroke-dasharray="0.9 1" stroke-linecap="butt" stroke-width="0.92"/>
<line x1="861.8" y1="228.1" x2="872.3" y2="227.2" stroke="#fff" stroke-width="3.2" /><path d="M861.8,229.6 V219.1 A10.5,10.5 0 0 1 872.3,229.6" fill="none" stroke="#333" stroke-width="0.6" /><circle cx="866.2" cy="230.5" r="3.5" fill="#fff" stroke="#222" stroke-width="0.6"/><text x="866.2" y="231.5" font-size="2.7" text-anchor="middle" fill="#333">207A</text><line x1="983.5" y1="218.0" x2="973.0" y2="218.8" stroke="#fff" stroke-width="3.2" /><path d="M983.5,219.5 V209.0 A10.5,10.5 0 0 0 973.0,219.5" fill="none" stroke="#333" stroke-width="0.6" /><circle cx="979.1" cy="220.4" r="3.5" fill="#fff" stroke="#222" stroke-width="0.6"/><text x="979.1" y="221.3" font-size="2.7" text-anchor="middle" fill="#333">207B</text>
<path d="M988.7,221.8 L1006,222 Q1009.5,222 1010.5,219.5 C1015,207 1028,198.9 1044,198.9 C1060,198.9 1073,207 1077.5,219.5 Q1078.5,222 1082,222 L1100,221.8" fill="none" stroke="#2e2e2e" stroke-width="2.2" /><path d="M988.7,221.8 L1006,222 Q1009.5,222 1010.5,219.5 C1015,207 1028,198.9 1044,198.9 C1060,198.9 1073,207 1077.5,219.5 Q1078.5,222 1082,222 L1100,221.8" fill="none" stroke="#d0d0d0" stroke-dasharray="0.9 1" stroke-linecap="butt" stroke-width="0.88"/>
<line x1="1044.0" y1="155.5" x2="1044.0" y2="199.0" stroke="#2e2e2e" stroke-width="2.3" /><line x1="1044.0" y1="155.5" x2="1044.0" y2="199.0" stroke="#d0d0d0" stroke-dasharray="0.9 1" stroke-linecap="butt" stroke-width="0.92"/>
<line x1="1100.0" y1="155.5" x2="1100.0" y2="222.0" stroke="#2e2e2e" stroke-width="2.3" /><line x1="1100.0" y1="155.5" x2="1100.0" y2="222.0" stroke="#d0d0d0" stroke-dasharray="0.9 1" stroke-linecap="butt" stroke-width="0.92"/>
<path d="M990.5,221 V211 A10,10 0 0 1 1000.5,221 M1098,221 V211 A10,10 0 0 0 1088,221" fill="none" stroke="#333" stroke-width="0.6" /><circle cx="997.0" cy="221.4" r="3.5" fill="#fff" stroke="#222" stroke-width="0.6"/><circle cx="1091.5" cy="221.4" r="3.5" fill="#fff" stroke="#222" stroke-width="0.6"/>
<path d="M1025.3,221.4 H1063.2 Q1057,230.6 1044.2,230.6 Q1031.5,230.6 1025.3,221.4 Z" fill="none" stroke="#333" stroke-width="0.8" />
<rect x="997.6" y="167.5" width="37.8" height="18.2" fill="none" stroke="#333" stroke-width="0.7" stroke-dasharray="1.6 1.2"/>
<rect x="1053.6" y="167.5" width="36.7" height="18.2" fill="none" stroke="#333" stroke-width="0.7" stroke-dasharray="1.6 1.2"/>
<rect x="1118.8" y="165.8" width="18.9" height="46.2" fill="none" stroke="#333" stroke-width="0.7" stroke-dasharray="1.6 1.2"/>
<rect x="1170.0" y="176.0" width="45.6" height="25.9" fill="none" stroke="#333" stroke-width="0.7" stroke-dasharray="1.6 1.2"/>
<rect x="877.5" y="172.7" width="92.5" height="37.1" fill="none" stroke="#3a2a20" stroke-width="0.9" />
<rect x="882.0" y="184.7" width="12.6" height="14.3" fill="none" stroke="#333" stroke-width="0.6" />
<path d="M882,191.8 L877,188 M882,191.8 L877,195.6 L873.6,191.8 L877,188" fill="none" stroke="#333" stroke-width="0.5" />
<text x="888.3" y="193.2" font-size="3.2" text-anchor="middle" fill="#333">A7.01</text>
<line x1="1100.0" y1="221.5" x2="1290.0" y2="237.5" stroke="#2e2e2e" stroke-width="1.8" /><line x1="1100.0" y1="221.5" x2="1290.0" y2="237.5" stroke="#d0d0d0" stroke-dasharray="0.9 1" stroke-linecap="butt" stroke-width="0.72"/>
<line x1="1155.6" y1="155.5" x2="1155.6" y2="226.2" stroke="#2e2e2e" stroke-width="2.2" /><line x1="1155.6" y1="155.5" x2="1155.6" y2="226.2" stroke="#d0d0d0" stroke-dasharray="0.9 1" stroke-linecap="butt" stroke-width="0.88"/>
<line x1="1229.6" y1="155.5" x2="1229.6" y2="232.4" stroke="#2e2e2e" stroke-width="2.3" /><line x1="1229.6" y1="155.5" x2="1229.6" y2="232.4" stroke="#d0d0d0" stroke-dasharray="0.9 1" stroke-linecap="butt" stroke-width="0.92"/>
<line x1="1229.6" y1="195.8" x2="1290.0" y2="195.8" stroke="#2e2e2e" stroke-width="2.2" /><line x1="1229.6" y1="195.8" x2="1290.0" y2="195.8" stroke="#d0d0d0" stroke-dasharray="0.9 1" stroke-linecap="butt" stroke-width="0.88"/>
<line x1="1107.0" y1="220.6" x2="1117.5" y2="221.5" stroke="#fff" stroke-width="3.2" /><path d="M1107.0,222.1 V211.6 A10.5,10.5 0 0 1 1117.5,222.1" fill="none" stroke="#333" stroke-width="0.6" /><circle cx="1111.4" cy="223.0" r="3.5" fill="#fff" stroke="#222" stroke-width="0.6"/><text x="1111.4" y="223.9" font-size="2.7" text-anchor="middle" fill="#333">210</text><line x1="1159.0" y1="225.0" x2="1169.5" y2="225.9" stroke="#fff" stroke-width="3.2" /><path d="M1159.0,226.5 V216.0 A10.5,10.5 0 0 1 1169.5,226.5" fill="none" stroke="#333" stroke-width="0.6" /><circle cx="1163.4" cy="227.4" r="3.5" fill="#fff" stroke="#222" stroke-width="0.6"/><text x="1163.4" y="228.3" font-size="2.7" text-anchor="middle" fill="#333">211</text><line x1="1227.4" y1="230.7" x2="1216.9" y2="229.8" stroke="#fff" stroke-width="3.2" /><path d="M1227.4,232.2 V221.7 A10.5,10.5 0 0 0 1216.9,232.2" fill="none" stroke="#333" stroke-width="0.6" /><circle cx="1223.0" cy="233.1" r="3.5" fill="#fff" stroke="#222" stroke-width="0.6"/><text x="1223.0" y="234.1" font-size="2.7" text-anchor="middle" fill="#333">213</text>
<path d="M1290,155.5 H534 V506.2 H1290" fill="none" stroke="#111" stroke-width="2.2" />
<path d="M534,256 L596,252.6 Q604,252.4 604,260.5 L604,399 Q604,407.4 596,407.2 L534,404.2" fill="none" stroke="#2e2e2e" stroke-width="1.8" /><path d="M534,256 L596,252.6 Q604,252.4 604,260.5 L604,399 Q604,407.4 596,407.2 L534,404.2" fill="none" stroke="#d0d0d0" stroke-dasharray="0.9 1" stroke-linecap="butt" stroke-width="0.72"/>
<line x1="534.0" y1="293.8" x2="604.0" y2="293.8" stroke="#2e2e2e" stroke-width="1.8" /><line x1="534.0" y1="293.8" x2="604.0" y2="293.8" stroke="#d0d0d0" stroke-dasharray="0.9 1" stroke-linecap="butt" stroke-width="0.72"/><line x1="534.0" y1="368.2" x2="604.0" y2="368.2" stroke="#2e2e2e" stroke-width="1.8" /><line x1="534.0" y1="368.2" x2="604.0" y2="368.2" stroke="#d0d0d0" stroke-dasharray="0.9 1" stroke-linecap="butt" stroke-width="0.72"/>
<rect x="555.0" y="303.4" width="29.0" height="56.2" fill="none" stroke="#333" stroke-width="0.8" />
<path d="M604,283.8 A10,10 0 0 0 594,293.8 A10,10 0 0 0 604,303.8" fill="none" stroke="#333" stroke-width="0.6" />
<circle cx="603.6" cy="286.5" r="3.2" fill="none" stroke="#333" stroke-width="0.6"/><circle cx="603.6" cy="301.1" r="3.2" fill="none" stroke="#333" stroke-width="0.6"/>
<line x1="594.0" y1="293.8" x2="604.0" y2="293.8" stroke="#2e2e2e" stroke-width="2.8" /><line x1="594.0" y1="293.8" x2="604.0" y2="293.8" stroke="#d0d0d0" stroke-dasharray="0.9 1" stroke-linecap="butt" stroke-width="1.12"/>
<path d="M604,358.2 A10,10 0 0 0 594,368.2 A10,10 0 0 0 604,378.2" fill="none" stroke="#333" stroke-width="0.6" />
<circle cx="603.6" cy="360.9" r="3.2" fill="none" stroke="#333" stroke-width="0.6"/><circle cx="603.6" cy="375.5" r="3.2" fill="none" stroke="#333" stroke-width="0.6"/>
<line x1="594.0" y1="368.2" x2="604.0" y2="368.2" stroke="#2e2e2e" stroke-width="2.8" /><line x1="594.0" y1="368.2" x2="604.0" y2="368.2" stroke="#d0d0d0" stroke-dasharray="0.9 1" stroke-linecap="butt" stroke-width="1.12"/>
<path d="M872,270.4 H634 Q627.7,270.4 627.7,277 V386 Q627.7,392.3 634,392.3 H872" fill="none" stroke="#333" stroke-width="0.7" stroke-dasharray="1.1 1.3"/>
<line x1="1217.0" y1="270.6" x2="1290.0" y2="270.6" stroke="#333" stroke-width="0.7" stroke-dasharray="1.1 1.3"/><line x1="1217.0" y1="392.2" x2="1290.0" y2="392.2" stroke="#333" stroke-width="0.7" stroke-dasharray="1.1 1.3"/>
<path d="M872.5,281.5 H830 Q822,281.5 822,290 V372.5 Q822,381 830,381 H872.5" fill="none" stroke="#2e2e2e" stroke-width="1.8" /><path d="M872.5,281.5 H830 Q822,281.5 822,290 V372.5 Q822,381 830,381 H872.5" fill="none" stroke="#d0d0d0" stroke-dasharray="0.9 1" stroke-linecap="butt" stroke-width="0.72"/>
<line x1="822.0" y1="331.3" x2="874.0" y2="331.3" stroke="#2e2e2e" stroke-width="2.2" /><line x1="822.0" y1="331.3" x2="874.0" y2="331.3" stroke="#d0d0d0" stroke-dasharray="0.9 1" stroke-linecap="butt" stroke-width="0.88"/>
<line x1="822.0" y1="319.6" x2="822.0" y2="343.0" stroke="#b1c5dd" stroke-width="3.4" /><path d="M822.0,319.3 A12,12 0 0 1 834.0,331.3 A12,12 0 0 1 822.0,343.3" fill="none" stroke="#333" stroke-width="0.6" /><line x1="820.8" y1="331.3" x2="834.0" y2="331.3" stroke="#2e2e2e" stroke-width="3.2" /><line x1="820.8" y1="331.3" x2="834.0" y2="331.3" stroke="#d0d0d0" stroke-dasharray="0.9 1" stroke-linecap="butt" stroke-width="1.28"/><circle cx="821.6" cy="323.7" r="3.5" fill="#b1c5dd" stroke="#222" stroke-width="0.6"/><text x="821.6" y="324.6" font-size="2.7" text-anchor="middle" fill="#333">249</text><circle cx="821.6" cy="338.9" r="3.5" fill="#b1c5dd" stroke="#222" stroke-width="0.6"/><text x="821.6" y="339.9" font-size="2.7" text-anchor="middle" fill="#333">250</text>
<path d="M1216,281 H1250.5 Q1258.5,281 1258.5,289.5 V372.5 Q1258.5,381 1250.5,381 H1216" fill="none" stroke="#2e2e2e" stroke-width="1.8" /><path d="M1216,281 H1250.5 Q1258.5,281 1258.5,289.5 V372.5 Q1258.5,381 1250.5,381 H1216" fill="none" stroke="#d0d0d0" stroke-dasharray="0.9 1" stroke-linecap="butt" stroke-width="0.72"/>
<line x1="1214.0" y1="331.3" x2="1258.5" y2="331.3" stroke="#2e2e2e" stroke-width="2.2" /><line x1="1214.0" y1="331.3" x2="1258.5" y2="331.3" stroke="#d0d0d0" stroke-dasharray="0.9 1" stroke-linecap="butt" stroke-width="0.88"/>
<line x1="1258.5" y1="319.6" x2="1258.5" y2="343.0" stroke="#fff" stroke-width="3.4" /><path d="M1258.5,319.3 A12,12 0 0 0 1246.5,331.3 A12,12 0 0 0 1258.5,343.3" fill="none" stroke="#333" stroke-width="0.6" /><line x1="1259.7" y1="331.3" x2="1246.5" y2="331.3" stroke="#2e2e2e" stroke-width="3.2" /><line x1="1259.7" y1="331.3" x2="1246.5" y2="331.3" stroke="#d0d0d0" stroke-dasharray="0.9 1" stroke-linecap="butt" stroke-width="1.28"/><circle cx="1258.9" cy="323.7" r="3.5" fill="#fff" stroke="#222" stroke-width="0.6"/><text x="1258.9" y="324.6" font-size="2.7" text-anchor="middle" fill="#333">261</text><circle cx="1258.9" cy="338.9" r="3.5" fill="#fff" stroke="#222" stroke-width="0.6"/><text x="1258.9" y="339.9" font-size="2.7" text-anchor="middle" fill="#333">262</text>
<line x1="1258.5" y1="280.8" x2="1290.0" y2="280.8" stroke="#333" stroke-width="0.7" /><line x1="1258.5" y1="381.4" x2="1290.0" y2="381.4" stroke="#333" stroke-width="0.7" />
<g id="core-left"><path d="M874,267 Q874,259.5 881,259.5 L893.5,259.5 L895,270 L929,270 L930,263 L1011,267.5 Q1023,268.5 1023,280 L1023,380 Q1023,392.5 1011,393.5 L930,400 L929,392.5 L895,392.5 L893.5,404.5 L881,404.5 Q874,404.5 874,397 Z" fill="none" stroke="#2e2e2e" stroke-width="2.1" /><path d="M874,267 Q874,259.5 881,259.5 L893.5,259.5 L895,270 L929,270 L930,263 L1011,267.5 Q1023,268.5 1023,280 L1023,380 Q1023,392.5 1011,393.5 L930,400 L929,392.5 L895,392.5 L893.5,404.5 L881,404.5 Q874,404.5 874,397 Z" fill="none" stroke="#d0d0d0" stroke-dasharray="0.9 1" stroke-linecap="butt" stroke-width="0.84"/>
<path d="M877.5,268 Q877.5,262.5 883,262.5 L890.5,262.5 M877.5,396 Q877.5,401.5 883,401.5 L890.5,401.5 M877.5,268 V396" fill="none" stroke="#444" stroke-width="0.6" stroke-dasharray="1.4 1.4"/>
<path d="M932,266.5 L1010,270.5 Q1020,271.5 1020,281 M932,396.8 L1010,390.5 Q1020,389.5 1020,380" fill="none" stroke="#444" stroke-width="0.6" />
<path d="M881.5,271.3 H992 M881.5,271.3 V391 M881.5,391 H992" fill="none" stroke="#2e2e2e" stroke-width="2.0" /><path d="M881.5,271.3 H992 M881.5,271.3 V391 M881.5,391 H992" fill="none" stroke="#d0d0d0" stroke-dasharray="0.9 1" stroke-linecap="butt" stroke-width="0.80"/>
<line x1="912.4" y1="271.3" x2="912.4" y2="391.0" stroke="#2e2e2e" stroke-width="2.4" /><line x1="912.4" y1="271.3" x2="912.4" y2="391.0" stroke="#d0d0d0" stroke-dasharray="0.9 1" stroke-linecap="butt" stroke-width="0.96"/>
<line x1="992.0" y1="271.3" x2="992.0" y2="391.0" stroke="#2e2e2e" stroke-width="2.2" /><line x1="992.0" y1="271.3" x2="992.0" y2="391.0" stroke="#d0d0d0" stroke-dasharray="0.9 1" stroke-linecap="butt" stroke-width="0.88"/>
<line x1="881.5" y1="338.5" x2="976.0" y2="338.5" stroke="#2e2e2e" stroke-width="1.6" /><line x1="881.5" y1="338.5" x2="976.0" y2="338.5" stroke="#d0d0d0" stroke-dasharray="0.9 1" stroke-linecap="butt" stroke-width="0.64"/>
<line x1="881.5" y1="341.5" x2="912.4" y2="341.5" stroke="#2e2e2e" stroke-width="1.0" />
<line x1="976.0" y1="271.3" x2="976.0" y2="341.0" stroke="#2e2e2e" stroke-width="1.4" />
<line x1="976.0" y1="341.0" x2="992.0" y2="341.0" stroke="#2e2e2e" stroke-width="1.4" />
<line x1="992.0" y1="350.5" x2="1023.0" y2="350.5" stroke="#2e2e2e" stroke-width="1.2" />
<line x1="992.0" y1="380.3" x2="1023.0" y2="380.3" stroke="#2e2e2e" stroke-width="1.4" />
<path d="M896,271.3 A9,9 0 0 0 905,280.3 M929,271.3 A9,9 0 0 1 920,280.3" fill="none" stroke="#333" stroke-width="0.6" />
<circle cx="904.6" cy="271.3" r="3.4" fill="#fff" stroke="#222" stroke-width="0.6"/><circle cx="920.2" cy="271.3" r="3.4" fill="#fff" stroke="#222" stroke-width="0.6"/>
<path d="M896,391 A9,9 0 0 1 905,382 M929,391 A9,9 0 0 0 920,382" fill="none" stroke="#333" stroke-width="0.6" />
<circle cx="904.6" cy="391.0" r="3.4" fill="#fff" stroke="#222" stroke-width="0.6"/><circle cx="920.2" cy="391.0" r="3.4" fill="#fff" stroke="#222" stroke-width="0.6"/>
<path d="M884,302 H910 M884,330 H910 M898,302 V330" fill="none" stroke="#333" stroke-width="0.7" />
<line x1="884.5" y1="303.5" x2="897.5" y2="303.5" stroke="#333" stroke-width="0.9" stroke-dasharray="0.9 1.3"/>
<line x1="899.0" y1="303.5" x2="909.8" y2="303.5" stroke="#222" stroke-width="0.6" />
<line x1="884.5" y1="305.8" x2="897.5" y2="305.8" stroke="#333" stroke-width="0.9" stroke-dasharray="0.9 1.3"/>
<line x1="899.0" y1="305.8" x2="909.8" y2="305.8" stroke="#222" stroke-width="0.6" />
<line x1="884.5" y1="308.1" x2="897.5" y2="308.1" stroke="#333" stroke-width="0.9" stroke-dasharray="0.9 1.3"/>
<line x1="899.0" y1="308.1" x2="909.8" y2="308.1" stroke="#222" stroke-width="0.6" />
<line x1="884.5" y1="310.4" x2="897.5" y2="310.4" stroke="#333" stroke-width="0.9" stroke-dasharray="0.9 1.3"/>
<line x1="899.0" y1="310.4" x2="909.8" y2="310.4" stroke="#222" stroke-width="0.6" />
<line x1="884.5" y1="312.7" x2="897.5" y2="312.7" stroke="#333" stroke-width="0.9" stroke-dasharray="0.9 1.3"/>
<line x1="899.0" y1="312.7" x2="909.8" y2="312.7" stroke="#222" stroke-width="0.6" />
<line x1="884.5" y1="315.0" x2="897.5" y2="315.0" stroke="#333" stroke-width="0.9" stroke-dasharray="0.9 1.3"/>
<line x1="899.0" y1="315.0" x2="909.8" y2="315.0" stroke="#222" stroke-width="0.6" />
<line x1="884.5" y1="317.3" x2="897.5" y2="317.3" stroke="#333" stroke-width="0.9" stroke-dasharray="0.9 1.3"/>
<line x1="899.0" y1="317.3" x2="909.8" y2="317.3" stroke="#222" stroke-width="0.6" />
<line x1="884.5" y1="319.6" x2="897.5" y2="319.6" stroke="#333" stroke-width="0.9" stroke-dasharray="0.9 1.3"/>
<line x1="899.0" y1="319.6" x2="909.8" y2="319.6" stroke="#222" stroke-width="0.6" />
<line x1="884.5" y1="321.9" x2="897.5" y2="321.9" stroke="#333" stroke-width="0.9" stroke-dasharray="0.9 1.3"/>
<line x1="899.0" y1="321.9" x2="909.8" y2="321.9" stroke="#222" stroke-width="0.6" />
<line x1="884.5" y1="324.2" x2="897.5" y2="324.2" stroke="#333" stroke-width="0.9" stroke-dasharray="0.9 1.3"/>
<line x1="899.0" y1="324.2" x2="909.8" y2="324.2" stroke="#222" stroke-width="0.6" />
<line x1="884.5" y1="326.5" x2="897.5" y2="326.5" stroke="#333" stroke-width="0.9" stroke-dasharray="0.9 1.3"/>
<line x1="899.0" y1="326.5" x2="909.8" y2="326.5" stroke="#222" stroke-width="0.6" />
<line x1="884.5" y1="328.8" x2="897.5" y2="328.8" stroke="#333" stroke-width="0.9" stroke-dasharray="0.9 1.3"/>
<line x1="899.0" y1="328.8" x2="909.8" y2="328.8" stroke="#222" stroke-width="0.6" />
<rect x="915.0" y="298.0" width="38.0" height="11.0" fill="none" stroke="#333" stroke-width="0.6" stroke-dasharray="1.4 1.2"/>
<line x1="921.3" y1="298.0" x2="921.3" y2="309.0" stroke="#333" stroke-width="0.5" stroke-dasharray="1.4 1.2"/>
<line x1="927.6" y1="298.0" x2="927.6" y2="309.0" stroke="#333" stroke-width="0.5" stroke-dasharray="1.4 1.2"/>
<line x1="934.0" y1="298.0" x2="934.0" y2="309.0" stroke="#333" stroke-width="0.5" stroke-dasharray="1.4 1.2"/>
<line x1="940.3" y1="298.0" x2="940.3" y2="309.0" stroke="#333" stroke-width="0.5" stroke-dasharray="1.4 1.2"/>
<line x1="946.6" y1="298.0" x2="946.6" y2="309.0" stroke="#333" stroke-width="0.5" stroke-dasharray="1.4 1.2"/>
<path d="M953,271.3 V309 H915" fill="none" stroke="#2e2e2e" stroke-width="1.0" />
<path d="M977,273 L991,306 M991,273 L977,306 M977,306 L991,340 M991,306 L977,340" fill="none" stroke="#333" stroke-width="0.6" />
<line x1="984.0" y1="273.0" x2="984.0" y2="340.0" stroke="#444" stroke-width="0.5" />
<rect x="998.0" y="284.0" width="22.0" height="29.0" fill="none" stroke="#3b4a30" stroke-width="0.7" /><path d="M998,284 L1020,313 M1020,284 L998,313" fill="none" stroke="#3b4a30" stroke-width="0.5599999999999999" /><rect x="998.0" y="316.0" width="22.0" height="30.0" fill="none" stroke="#3b4a30" stroke-width="0.7" /><path d="M998,316 L1020,346 M1020,316 L998,346" fill="none" stroke="#3b4a30" stroke-width="0.5599999999999999" />
<rect x="994.6" y="281.0" width="26.9" height="68.3" fill="none" stroke="#3b4a30" stroke-width="0.6" />
<rect x="999.3" y="362.5" width="19.3" height="15.5" fill="none" stroke="#222" stroke-width="0.7" /><path d="M999.3,362.5 L1018.6,378 M1018.6,362.5 L999.3,378" fill="none" stroke="#222" stroke-width="0.5599999999999999" /><rect x="1009.0" y="353.0" width="9.6" height="8.0" fill="none" stroke="#222" stroke-width="0.6" /><line x1="1009.0" y1="361.0" x2="1018.6" y2="353.0" stroke="#222" stroke-width="0.5" />
<path d="M936,341 V366 H916 M936,341 H976 M936,352 V341" fill="none" stroke="#2e2e2e" stroke-width="0.8" />
<path d="M937,366 V374 M973,341 V376 L980,381 M948.5,341 V357 M960,341 V357 M946,357 H951 M957.5,357 H962.5" fill="none" stroke="#333" stroke-width="0.7" />
<circle cx="942.6" cy="348" r="2" fill="#333"/>
<line x1="942.6" y1="341.5" x2="942.6" y2="346.0" stroke="#333" stroke-width="1.2" />
<circle cx="954.2" cy="348" r="2" fill="#333"/>
<line x1="954.2" y1="341.5" x2="954.2" y2="346.0" stroke="#333" stroke-width="1.2" />
<circle cx="965.6" cy="348" r="2" fill="#333"/>
<line x1="965.6" y1="341.5" x2="965.6" y2="346.0" stroke="#333" stroke-width="1.2" />
<circle cx="986" cy="348" r="2" fill="#333"/>
<line x1="986.0" y1="341.5" x2="986.0" y2="346.0" stroke="#333" stroke-width="1.2" />
<rect x="937.0" y="381.0" width="35.0" height="8.0" fill="none" stroke="#333" stroke-width="0.8" />
<rect x="943.5" y="383.0" width="6.0" height="4.5" fill="none" stroke="#222" stroke-width="1.0" /><rect x="959.0" y="383.0" width="6.0" height="4.5" fill="none" stroke="#222" stroke-width="1.0" />
<path d="M934.5,331.5 L927.5,355" fill="none" stroke="#333" stroke-width="0.5" /><circle cx="927.5" cy="355" r="0.9" fill="#222"/>
<rect x="915.0" y="344.0" width="5.0" height="5.0" fill="none" stroke="#333" stroke-width="0.5" />
<circle cx="977.0" cy="373.5" r="3.2" fill="#fff" stroke="#222" stroke-width="0.6"/><circle cx="920.0" cy="367.5" r="3.6" fill="#fff" stroke="#222" stroke-width="0.6"/>
<path d="M914,371 A9,9 0 0 1 923,362" fill="none" stroke="#333" stroke-width="0.5" />
<rect x="884.0" y="366.0" width="7.0" height="15.0" fill="none" stroke="#333" stroke-width="0.6" /><rect x="884.5" y="376.0" width="5.5" height="5.0" fill="none" stroke="#222" stroke-width="1.0" />
<circle cx="952.5" cy="273.5" r="3.4" fill="#fff" stroke="#222" stroke-width="0.6"/>
<path d="M953,280 A8,8 0 0 0 945,272" fill="none" stroke="#333" stroke-width="0.5" />
<path d="M993,399 L1000.5,409.3 H1008" fill="none" stroke="#333" stroke-width="0.6" /><circle cx="1014.6" cy="409.3" r="6.4" fill="#fff" stroke="#222" stroke-width="0.6"/>
<line x1="1008.3" y1="409.3" x2="1020.9" y2="409.3" stroke="#333" stroke-width="0.5" />
<text x="1014.6" y="408.3" font-size="3" text-anchor="middle" fill="#333">1</text><text x="1014.6" y="412.8" font-size="2.8" text-anchor="middle" fill="#333">A8.02</text>
</g>
<g id="core-right"><g transform="translate(2089.3 0) scale(-1 1)"><path d="M874,267 Q874,259.5 881,259.5 L893.5,259.5 L895,270 L929,270 L930,263 L1011,267.5 Q1023,268.5 1023,280 L1023,380 Q1023,392.5 1011,393.5 L930,400 L929,392.5 L895,392.5 L893.5,404.5 L881,404.5 Q874,404.5 874,397 Z" fill="none" stroke="#2e2e2e" stroke-width="2.1" /><path d="M874,267 Q874,259.5 881,259.5 L893.5,259.5 L895,270 L929,270 L930,263 L1011,267.5 Q1023,268.5 1023,280 L1023,380 Q1023,392.5 1011,393.5 L930,400 L929,392.5 L895,392.5 L893.5,404.5 L881,404.5 Q874,404.5 874,397 Z" fill="none" stroke="#d0d0d0" stroke-dasharray="0.9 1" stroke-linecap="butt" stroke-width="0.84"/>
<path d="M877.5,268 Q877.5,262.5 883,262.5 L890.5,262.5 M877.5,396 Q877.5,401.5 883,401.5 L890.5,401.5 M877.5,268 V396" fill="none" stroke="#444" stroke-width="0.6" stroke-dasharray="1.4 1.4"/>
<path d="M932,266.5 L1010,270.5 Q1020,271.5 1020,281 M932,396.8 L1010,390.5 Q1020,389.5 1020,380" fill="none" stroke="#444" stroke-width="0.6" />
<path d="M881.5,271.3 H992 M881.5,271.3 V391 M881.5,391 H992" fill="none" stroke="#2e2e2e" stroke-width="2.0" /><path d="M881.5,271.3 H992 M881.5,271.3 V391 M881.5,391 H992" fill="none" stroke="#d0d0d0" stroke-dasharray="0.9 1" stroke-linecap="butt" stroke-width="0.80"/>
<line x1="912.4" y1="271.3" x2="912.4" y2="391.0" stroke="#2e2e2e" stroke-width="2.4" /><line x1="912.4" y1="271.3" x2="912.4" y2="391.0" stroke="#d0d0d0" stroke-dasharray="0.9 1" stroke-linecap="butt" stroke-width="0.96"/>
<line x1="992.0" y1="271.3" x2="992.0" y2="391.0" stroke="#2e2e2e" stroke-width="2.2" /><line x1="992.0" y1="271.3" x2="992.0" y2="391.0" stroke="#d0d0d0" stroke-dasharray="0.9 1" stroke-linecap="butt" stroke-width="0.88"/>
<line x1="992.0" y1="350.5" x2="1023.0" y2="350.5" stroke="#2e2e2e" stroke-width="1.2" />
<line x1="992.0" y1="380.3" x2="1023.0" y2="380.3" stroke="#2e2e2e" stroke-width="1.4" />
<path d="M896,271.3 A9,9 0 0 0 905,280.3 M929,271.3 A9,9 0 0 1 920,280.3" fill="none" stroke="#333" stroke-width="0.6" />
<circle cx="904.6" cy="271.3" r="3.4" fill="#fff" stroke="#222" stroke-width="0.6"/><circle cx="920.2" cy="271.3" r="3.4" fill="#fff" stroke="#222" stroke-width="0.6"/>
<path d="M896,391 A9,9 0 0 1 905,382 M929,391 A9,9 0 0 0 920,382" fill="none" stroke="#333" stroke-width="0.6" />
<circle cx="904.6" cy="391.0" r="3.4" fill="#fff" stroke="#222" stroke-width="0.6"/><circle cx="920.2" cy="391.0" r="3.4" fill="#fff" stroke="#222" stroke-width="0.6"/></g>
<rect x="1068.6" y="283.2" width="22.7" height="29.8" fill="none" stroke="#555" stroke-width="0.6" /><path d="M1068.6,283.2 L1091.3,313 M1091.3,283.2 L1068.6,313" fill="none" stroke="#555" stroke-width="0.48" /><rect x="1068.6" y="283.2" width="22.7" height="29.8" fill="none" stroke="#cf3a32" stroke-width="0.9" /><rect x="1068.6" y="316.0" width="22.7" height="30.7" fill="none" stroke="#222" stroke-width="0.7" /><path d="M1068.6,316 L1091.3,346.7 M1091.3,316 L1068.6,346.7" fill="none" stroke="#222" stroke-width="0.5599999999999999" />
<rect x="1069.7" y="362.5" width="18.9" height="15.5" fill="none" stroke="#222" stroke-width="0.8" /><rect x="1071.2" y="364.0" width="15.9" height="12.5" fill="none" stroke="#222" stroke-width="0.5" /><line x1="1071.2" y1="376.5" x2="1087.1" y2="364.0" stroke="#222" stroke-width="0.6" />
<line x1="1097.3" y1="271.3" x2="1097.3" y2="350.5" stroke="#2e2e2e" stroke-width="2.2" /><line x1="1097.3" y1="271.3" x2="1097.3" y2="350.5" stroke="#d0d0d0" stroke-dasharray="0.9 1" stroke-linecap="butt" stroke-width="0.88"/>
<line x1="1097.3" y1="340.5" x2="1177.0" y2="340.5" stroke="#2e2e2e" stroke-width="1.6" /><line x1="1097.3" y1="340.5" x2="1177.0" y2="340.5" stroke="#d0d0d0" stroke-dasharray="0.9 1" stroke-linecap="butt" stroke-width="0.64"/>
<path d="M1177,320 H1207" fill="none" stroke="#2e2e2e" stroke-width="1.4" />
<path d="M1179,322.5 H1206 M1179,354 H1206 M1192.6,322.5 V354" fill="none" stroke="#333" stroke-width="0.8" />
<line x1="1193.5" y1="324.0" x2="1204.8" y2="324.0" stroke="#222" stroke-width="0.6" />
<line x1="1179.5" y1="324.0" x2="1191.8" y2="324.0" stroke="#333" stroke-width="0.9" stroke-dasharray="0.9 1.3"/>
<line x1="1193.5" y1="326.3" x2="1204.8" y2="326.3" stroke="#222" stroke-width="0.6" />
<line x1="1179.5" y1="326.3" x2="1191.8" y2="326.3" stroke="#333" stroke-width="0.9" stroke-dasharray="0.9 1.3"/>
<line x1="1193.5" y1="328.6" x2="1204.8" y2="328.6" stroke="#222" stroke-width="0.6" />
<line x1="1179.5" y1="328.6" x2="1191.8" y2="328.6" stroke="#333" stroke-width="0.9" stroke-dasharray="0.9 1.3"/>
<line x1="1193.5" y1="330.9" x2="1204.8" y2="330.9" stroke="#222" stroke-width="0.6" />
<line x1="1179.5" y1="330.9" x2="1191.8" y2="330.9" stroke="#333" stroke-width="0.9" stroke-dasharray="0.9 1.3"/>
<line x1="1193.5" y1="333.2" x2="1204.8" y2="333.2" stroke="#222" stroke-width="0.6" />
<line x1="1179.5" y1="333.2" x2="1191.8" y2="333.2" stroke="#333" stroke-width="0.9" stroke-dasharray="0.9 1.3"/>
<line x1="1193.5" y1="335.5" x2="1204.8" y2="335.5" stroke="#222" stroke-width="0.6" />
<line x1="1179.5" y1="335.5" x2="1191.8" y2="335.5" stroke="#333" stroke-width="0.9" stroke-dasharray="0.9 1.3"/>
<line x1="1193.5" y1="337.8" x2="1204.8" y2="337.8" stroke="#222" stroke-width="0.6" />
<line x1="1179.5" y1="337.8" x2="1191.8" y2="337.8" stroke="#333" stroke-width="0.9" stroke-dasharray="0.9 1.3"/>
<line x1="1193.5" y1="340.1" x2="1204.8" y2="340.1" stroke="#222" stroke-width="0.6" />
<line x1="1179.5" y1="340.1" x2="1191.8" y2="340.1" stroke="#333" stroke-width="0.9" stroke-dasharray="0.9 1.3"/>
<line x1="1193.5" y1="342.4" x2="1204.8" y2="342.4" stroke="#222" stroke-width="0.6" />
<line x1="1179.5" y1="342.4" x2="1191.8" y2="342.4" stroke="#333" stroke-width="0.9" stroke-dasharray="0.9 1.3"/>
<line x1="1193.5" y1="344.7" x2="1204.8" y2="344.7" stroke="#222" stroke-width="0.6" />
<line x1="1179.5" y1="344.7" x2="1191.8" y2="344.7" stroke="#333" stroke-width="0.9" stroke-dasharray="0.9 1.3"/>
<line x1="1193.5" y1="347.0" x2="1204.8" y2="347.0" stroke="#222" stroke-width="0.6" />
<line x1="1179.5" y1="347.0" x2="1191.8" y2="347.0" stroke="#333" stroke-width="0.9" stroke-dasharray="0.9 1.3"/>
<line x1="1193.5" y1="349.3" x2="1204.8" y2="349.3" stroke="#222" stroke-width="0.6" />
<line x1="1179.5" y1="349.3" x2="1191.8" y2="349.3" stroke="#333" stroke-width="0.9" stroke-dasharray="0.9 1.3"/>
<line x1="1193.5" y1="351.6" x2="1204.8" y2="351.6" stroke="#222" stroke-width="0.6" />
<line x1="1179.5" y1="351.6" x2="1191.8" y2="351.6" stroke="#333" stroke-width="0.9" stroke-dasharray="0.9 1.3"/>
<path d="M1116,341 V366 M1116,352 L1122,358 M1153,341 V352 L1161,366 H1176 M1128,341 V350 M1128,360 V371 H1148 V341" fill="none" stroke="#333" stroke-width="0.7" />
<rect x="1128.5" y="343.0" width="19.0" height="17.0" fill="none" stroke="#555" stroke-width="0.5" stroke-dasharray="1.2 1.2"/>
<circle cx="1103" cy="348" r="2" fill="#333"/>
<line x1="1103.0" y1="341.5" x2="1103.0" y2="346.0" stroke="#333" stroke-width="1.2" />
<circle cx="1122.5" cy="348" r="2" fill="#333"/>
<line x1="1122.5" y1="341.5" x2="1122.5" y2="346.0" stroke="#333" stroke-width="1.2" />
<path d="M1157,345 L1163,355" fill="none" stroke="#333" stroke-width="0.5" /><circle cx="1163" cy="355" r="0.9" fill="#222"/>
<rect x="1169.0" y="344.0" width="5.0" height="5.0" fill="none" stroke="#333" stroke-width="0.5" />
<rect x="1117.0" y="381.0" width="35.0" height="8.0" fill="none" stroke="#333" stroke-width="0.8" />
<rect x="1122.0" y="383.0" width="6.0" height="4.5" fill="none" stroke="#222" stroke-width="1.0" /><rect x="1140.0" y="383.0" width="6.0" height="4.5" fill="none" stroke="#222" stroke-width="1.0" />
<circle cx="1112.0" cy="373.8" r="3.2" fill="#fff" stroke="#222" stroke-width="0.6"/><circle cx="1168.5" cy="367.5" r="3.6" fill="#fff" stroke="#222" stroke-width="0.6"/>
<path d="M1175,371 A9,9 0 0 0 1166,362" fill="none" stroke="#333" stroke-width="0.5" />
<path d="M1104,286 H1121 V328 H1104 Z M1112.5,286 V328 M1104,299.5 H1121 M1104,314 H1121 M1125.5,286 H1143 V328 H1125.5 Z M1134.25,286 V328 M1125.5,299.5 H1143 M1125.5,314 H1143 M1148,286 H1165 V328 H1148 Z M1156.5,286 V328 M1148,299.5 H1165 M1148,314 H1165" fill="none" stroke="#b52f2f" stroke-width="0.7" />
</g>
<path d="M672.7,506 V424.0 Q672.7,417.0 679.7,417.6 L740.8,422.3 Q747.8,422.8 747.8,429.8 V506" fill="none" stroke="#2e2e2e" stroke-width="2.3" /><path d="M672.7,506 V424.0 Q672.7,417.0 679.7,417.6 L740.8,422.3 Q747.8,422.8 747.8,429.8 V506" fill="none" stroke="#d0d0d0" stroke-dasharray="0.9 1" stroke-linecap="butt" stroke-width="0.92"/><line x1="672.7" y1="460.6" x2="747.8" y2="460.6" stroke="#2e2e2e" stroke-width="2.2" /><line x1="672.7" y1="460.6" x2="747.8" y2="460.6" stroke="#d0d0d0" stroke-dasharray="0.9 1" stroke-linecap="butt" stroke-width="0.88"/><line x1="747.8" y1="448.9" x2="747.8" y2="472.3" stroke="#fff" stroke-width="3.4" /><path d="M747.8,448.6 A12,12 0 0 0 735.8,460.6 A12,12 0 0 0 747.8,472.6" fill="none" stroke="#333" stroke-width="0.6" /><line x1="749.0" y1="460.6" x2="735.8" y2="460.6" stroke="#2e2e2e" stroke-width="3.2" /><line x1="749.0" y1="460.6" x2="735.8" y2="460.6" stroke="#d0d0d0" stroke-dasharray="0.9 1" stroke-linecap="butt" stroke-width="1.28"/><circle cx="748.2" cy="453.0" r="3.5" fill="#fff" stroke="#222" stroke-width="0.6"/><text x="748.2" y="453.9" font-size="2.7" text-anchor="middle" fill="#333">242</text><circle cx="748.2" cy="468.2" r="3.5" fill="#fff" stroke="#222" stroke-width="0.6"/><text x="748.2" y="469.2" font-size="2.7" text-anchor="middle" fill="#333">243</text>
<path d="M784.3,506 V432.6 Q784.3,425.6 791.3,426.2 L851.5,430.8 Q858.5,431.4 858.5,438.4 V506" fill="none" stroke="#2e2e2e" stroke-width="2.3" /><path d="M784.3,506 V432.6 Q784.3,425.6 791.3,426.2 L851.5,430.8 Q858.5,431.4 858.5,438.4 V506" fill="none" stroke="#d0d0d0" stroke-dasharray="0.9 1" stroke-linecap="butt" stroke-width="0.92"/><line x1="821.8" y1="428.5" x2="821.8" y2="506.0" stroke="#2e2e2e" stroke-width="1.8" /><line x1="821.8" y1="428.5" x2="821.8" y2="506.0" stroke="#d0d0d0" stroke-dasharray="0.9 1" stroke-linecap="butt" stroke-width="0.72"/><line x1="784.3" y1="467.8" x2="858.5" y2="467.8" stroke="#2e2e2e" stroke-width="2.2" /><line x1="784.3" y1="467.8" x2="858.5" y2="467.8" stroke="#d0d0d0" stroke-dasharray="0.9 1" stroke-linecap="butt" stroke-width="0.88"/><line x1="784.3" y1="456.1" x2="784.3" y2="479.5" stroke="#fff" stroke-width="3.4" /><path d="M784.3,455.8 A12,12 0 0 1 796.3,467.8 A12,12 0 0 1 784.3,479.8" fill="none" stroke="#333" stroke-width="0.6" /><line x1="783.1" y1="467.8" x2="796.3" y2="467.8" stroke="#2e2e2e" stroke-width="3.2" /><line x1="783.1" y1="467.8" x2="796.3" y2="467.8" stroke="#d0d0d0" stroke-dasharray="0.9 1" stroke-linecap="butt" stroke-width="1.28"/><circle cx="783.9" cy="460.2" r="3.5" fill="#fff" stroke="#222" stroke-width="0.6"/><text x="783.9" y="461.1" font-size="2.7" text-anchor="middle" fill="#333">240</text><circle cx="783.9" cy="475.4" r="3.5" fill="#fff" stroke="#222" stroke-width="0.6"/><text x="783.9" y="476.4" font-size="2.7" text-anchor="middle" fill="#333">241</text><line x1="858.5" y1="456.1" x2="858.5" y2="479.5" stroke="#fff" stroke-width="3.4" /><path d="M858.5,455.8 A12,12 0 0 0 846.5,467.8 A12,12 0 0 0 858.5,479.8" fill="none" stroke="#333" stroke-width="0.6" /><line x1="859.7" y1="467.8" x2="846.5" y2="467.8" stroke="#2e2e2e" stroke-width="3.2" /><line x1="859.7" y1="467.8" x2="846.5" y2="467.8" stroke="#d0d0d0" stroke-dasharray="0.9 1" stroke-linecap="butt" stroke-width="1.28"/><circle cx="858.9" cy="460.2" r="3.5" fill="#fff" stroke="#222" stroke-width="0.6"/><text x="858.9" y="461.1" font-size="2.7" text-anchor="middle" fill="#333">238</text><circle cx="858.9" cy="475.4" r="3.5" fill="#fff" stroke="#222" stroke-width="0.6"/><text x="858.9" y="476.4" font-size="2.7" text-anchor="middle" fill="#333">239</text>
<path d="M895.5,506 V441.2 Q895.5,434.2 902.5,434.8 L963.2,439.5 Q970.2,440.0 970.2,447.0 V506" fill="none" stroke="#2e2e2e" stroke-width="2.3" /><path d="M895.5,506 V441.2 Q895.5,434.2 902.5,434.8 L963.2,439.5 Q970.2,440.0 970.2,447.0 V506" fill="none" stroke="#d0d0d0" stroke-dasharray="0.9 1" stroke-linecap="butt" stroke-width="0.92"/><line x1="932.8" y1="437.1" x2="932.8" y2="506.0" stroke="#2e2e2e" stroke-width="1.8" /><line x1="932.8" y1="437.1" x2="932.8" y2="506.0" stroke="#d0d0d0" stroke-dasharray="0.9 1" stroke-linecap="butt" stroke-width="0.72"/><line x1="895.5" y1="467.6" x2="970.2" y2="467.6" stroke="#2e2e2e" stroke-width="2.2" /><line x1="895.5" y1="467.6" x2="970.2" y2="467.6" stroke="#d0d0d0" stroke-dasharray="0.9 1" stroke-linecap="butt" stroke-width="0.88"/><line x1="895.5" y1="455.9" x2="895.5" y2="479.3" stroke="#fff" stroke-width="3.4" /><path d="M895.5,455.6 A12,12 0 0 1 907.5,467.6 A12,12 0 0 1 895.5,479.6" fill="none" stroke="#333" stroke-width="0.6" /><line x1="894.3" y1="467.6" x2="907.5" y2="467.6" stroke="#2e2e2e" stroke-width="3.2" /><line x1="894.3" y1="467.6" x2="907.5" y2="467.6" stroke="#d0d0d0" stroke-dasharray="0.9 1" stroke-linecap="butt" stroke-width="1.28"/><circle cx="895.1" cy="460.0" r="3.5" fill="#fff" stroke="#222" stroke-width="0.6"/><text x="895.1" y="460.9" font-size="2.7" text-anchor="middle" fill="#333">236</text><circle cx="895.1" cy="475.2" r="3.5" fill="#fff" stroke="#222" stroke-width="0.6"/><text x="895.1" y="476.2" font-size="2.7" text-anchor="middle" fill="#333">237</text><line x1="970.2" y1="455.9" x2="970.2" y2="479.3" stroke="#fff" stroke-width="3.4" /><path d="M970.2,455.6 A12,12 0 0 0 958.2,467.6 A12,12 0 0 0 970.2,479.6" fill="none" stroke="#333" stroke-width="0.6" /><line x1="971.4" y1="467.6" x2="958.2" y2="467.6" stroke="#2e2e2e" stroke-width="3.2" /><line x1="971.4" y1="467.6" x2="958.2" y2="467.6" stroke="#d0d0d0" stroke-dasharray="0.9 1" stroke-linecap="butt" stroke-width="1.28"/><circle cx="970.6" cy="460.0" r="3.5" fill="#fff" stroke="#222" stroke-width="0.6"/><text x="970.6" y="460.9" font-size="2.7" text-anchor="middle" fill="#333">234</text><circle cx="970.6" cy="475.2" r="3.5" fill="#fff" stroke="#222" stroke-width="0.6"/><text x="970.6" y="476.2" font-size="2.7" text-anchor="middle" fill="#333">235</text>
<path d="M1119,506 V447.2 Q1119,440.2 1126,439.6 L1185.4,434.5 Q1192.4,433.9 1192.4,440.9 V506" fill="none" stroke="#2e2e2e" stroke-width="2.3" /><path d="M1119,506 V447.2 Q1119,440.2 1126,439.6 L1185.4,434.5 Q1192.4,433.9 1192.4,440.9 V506" fill="none" stroke="#d0d0d0" stroke-dasharray="0.9 1" stroke-linecap="butt" stroke-width="0.92"/><line x1="1155.3" y1="437.1" x2="1155.3" y2="506.0" stroke="#2e2e2e" stroke-width="1.8" /><line x1="1155.3" y1="437.1" x2="1155.3" y2="506.0" stroke="#d0d0d0" stroke-dasharray="0.9 1" stroke-linecap="butt" stroke-width="0.72"/><line x1="1119.0" y1="468.0" x2="1192.4" y2="468.0" stroke="#2e2e2e" stroke-width="2.2" /><line x1="1119.0" y1="468.0" x2="1192.4" y2="468.0" stroke="#d0d0d0" stroke-dasharray="0.9 1" stroke-linecap="butt" stroke-width="0.88"/><line x1="1119.0" y1="456.3" x2="1119.0" y2="479.7" stroke="#fff" stroke-width="3.4" /><path d="M1119.0,456.0 A12,12 0 0 1 1131.0,468.0 A12,12 0 0 1 1119.0,480.0" fill="none" stroke="#333" stroke-width="0.6" /><line x1="1117.8" y1="468.0" x2="1131.0" y2="468.0" stroke="#2e2e2e" stroke-width="3.2" /><line x1="1117.8" y1="468.0" x2="1131.0" y2="468.0" stroke="#d0d0d0" stroke-dasharray="0.9 1" stroke-linecap="butt" stroke-width="1.28"/><circle cx="1118.6" cy="460.4" r="3.5" fill="#fff" stroke="#222" stroke-width="0.6"/><text x="1118.6" y="461.3" font-size="2.7" text-anchor="middle" fill="#333">231</text><circle cx="1118.6" cy="475.6" r="3.5" fill="#fff" stroke="#222" stroke-width="0.6"/><text x="1118.6" y="476.6" font-size="2.7" text-anchor="middle" fill="#333">232</text><line x1="1192.4" y1="456.3" x2="1192.4" y2="479.7" stroke="#fff" stroke-width="3.4" /><path d="M1192.4,456.0 A12,12 0 0 0 1180.4,468.0 A12,12 0 0 0 1192.4,480.0" fill="none" stroke="#333" stroke-width="0.6" /><line x1="1193.6" y1="468.0" x2="1180.4" y2="468.0" stroke="#2e2e2e" stroke-width="3.2" /><line x1="1193.6" y1="468.0" x2="1180.4" y2="468.0" stroke="#d0d0d0" stroke-dasharray="0.9 1" stroke-linecap="butt" stroke-width="1.28"/><circle cx="1192.8" cy="460.4" r="3.5" fill="#fff" stroke="#222" stroke-width="0.6"/><text x="1192.8" y="461.3" font-size="2.7" text-anchor="middle" fill="#333">229</text><circle cx="1192.8" cy="475.6" r="3.5" fill="#fff" stroke="#222" stroke-width="0.6"/><text x="1192.8" y="476.6" font-size="2.7" text-anchor="middle" fill="#333">230</text>
<path d="M1229.3,506 V437.8 Q1229.3,430.8 1236.3,430.2 L1290,425.6" fill="none" stroke="#2e2e2e" stroke-width="2.3" /><path d="M1229.3,506 V437.8 Q1229.3,430.8 1236.3,430.2 L1290,425.6" fill="none" stroke="#d0d0d0" stroke-dasharray="0.9 1" stroke-linecap="butt" stroke-width="0.92"/>
<line x1="1267.0" y1="427.5" x2="1267.0" y2="506.0" stroke="#2e2e2e" stroke-width="1.8" /><line x1="1267.0" y1="427.5" x2="1267.0" y2="506.0" stroke="#d0d0d0" stroke-dasharray="0.9 1" stroke-linecap="butt" stroke-width="0.72"/><line x1="1229.3" y1="467.6" x2="1290.0" y2="467.6" stroke="#2e2e2e" stroke-width="2.2" /><line x1="1229.3" y1="467.6" x2="1290.0" y2="467.6" stroke="#d0d0d0" stroke-dasharray="0.9 1" stroke-linecap="butt" stroke-width="0.88"/>
<line x1="1229.3" y1="455.9" x2="1229.3" y2="479.3" stroke="#fff" stroke-width="3.4" /><path d="M1229.3,455.6 A12,12 0 0 1 1241.3,467.6 A12,12 0 0 1 1229.3,479.6" fill="none" stroke="#333" stroke-width="0.6" /><line x1="1228.1" y1="467.6" x2="1241.3" y2="467.6" stroke="#2e2e2e" stroke-width="3.2" /><line x1="1228.1" y1="467.6" x2="1241.3" y2="467.6" stroke="#d0d0d0" stroke-dasharray="0.9 1" stroke-linecap="butt" stroke-width="1.28"/><circle cx="1228.9" cy="460.0" r="3.5" fill="#fff" stroke="#222" stroke-width="0.6"/><text x="1228.9" y="460.9" font-size="2.7" text-anchor="middle" fill="#333">227</text><circle cx="1228.9" cy="475.2" r="3.5" fill="#fff" stroke="#222" stroke-width="0.6"/><text x="1228.9" y="476.2" font-size="2.7" text-anchor="middle" fill="#333">228</text>
<rect x="967.7" y="432.0" width="154.3" height="83.5" fill="none" stroke="#2a2a2a" stroke-width="0.9" rx="3" stroke-dasharray="4 2"/>
<line x1="970.2" y1="440.0" x2="988.7" y2="440.2" stroke="#333" stroke-width="0.8" stroke-dasharray="1.2 1.6"/><line x1="1100.2" y1="440.2" x2="1119.0" y2="440.2" stroke="#333" stroke-width="0.8" stroke-dasharray="1.2 1.6"/>
<path d="M988.7,440.6 L1044.5,444.6 L1100.2,440.6" fill="none" stroke="#2e2e2e" stroke-width="2.0" /><path d="M988.7,440.6 L1044.5,444.6 L1100.2,440.6" fill="none" stroke="#d0d0d0" stroke-dasharray="0.9 1" stroke-linecap="butt" stroke-width="0.80"/>
<path d="M988.7,448.2 H1100.2 M988.7,440 V457 M1100.2,440 V457 M1007,457 H1082" fill="none" stroke="#2e2e2e" stroke-width="1.6" /><path d="M988.7,448.2 H1100.2 M988.7,440 V457 M1100.2,440 V457 M1007,457 H1082" fill="none" stroke="#d0d0d0" stroke-dasharray="0.9 1" stroke-linecap="butt" stroke-width="0.64"/>
<rect x="990.6" y="449.2" width="16.4" height="7.8" fill="none" stroke="#2e2e2e" stroke-width="1.2" /><rect x="1081.8" y="449.2" width="17.4" height="7.8" fill="none" stroke="#2e2e2e" stroke-width="1.2" />
<rect x="1039.5" y="449.6" width="10.3" height="6.4" fill="none" stroke="#222" stroke-width="0.7" rx="2"/><line x1="1044.6" y1="449.6" x2="1044.6" y2="452.0" stroke="#222" stroke-width="1" />
<line x1="1015.8" y1="453.4" x2="1073.0" y2="453.4" stroke="#333" stroke-width="0.6" stroke-dasharray="1.2 1.4"/>
<rect x="1010.4" y="461.7" width="68.5" height="22.3" fill="none" stroke="#333" stroke-width="0.7" stroke-dasharray="1.2 1.3"/>
<path d="M1010.4,467.5 H1078.9 M1010.4,479.2 H1078.9" fill="none" stroke="#333" stroke-width="0.7" />
<rect x="983.2" y="492.8" width="122.3" height="10.6" fill="none" stroke="#333" stroke-width="0.8" />
<rect x="985.5" y="494.5" width="117.7" height="7.2" fill="none" stroke="#444" stroke-width="0.5" />
<rect x="983.8" y="493.4" width="10.2" height="9.4" fill="none" stroke="#333" stroke-width="1.8" /><rect x="1094.6" y="493.4" width="10.3" height="9.4" fill="none" stroke="#333" stroke-width="1.8" />
<path d="M1122,515 L1127.5,522" fill="none" stroke="#333" stroke-width="0.6" /><circle cx="1132.6" cy="527.1" r="7.2" fill="#fff" stroke="#222" stroke-width="0.6"/>
<line x1="1125.4" y1="527.1" x2="1139.8" y2="527.1" stroke="#333" stroke-width="0.5" />
<text x="1132.6" y="526" font-size="3.2" text-anchor="middle" fill="#333">21</text><text x="1132.6" y="531" font-size="2.8" text-anchor="middle" fill="#333">A5.01</text>
</g>
<g id="labels">
<text x="580.7" y="202.8" font-size="5.0" font-weight="700" fill="#111" textLength="39.5" lengthAdjust="spacingAndGlyphs">OPEN OFFICE 200</text><line x1="580.4" y1="203.7" x2="620.6" y2="203.7" stroke="#111" stroke-width="0.7" />
<text x="676.1" y="174.8" font-size="5.0" font-weight="700" fill="#111" textLength="29.5" lengthAdjust="spacingAndGlyphs">MEETING 201</text><line x1="675.8" y1="175.7" x2="705.8" y2="175.7" stroke="#111" stroke-width="0.7" />
<text x="714.6" y="174.8" font-size="5.0" font-weight="700" fill="#111" textLength="29.5" lengthAdjust="spacingAndGlyphs">MEETING 203</text><line x1="714.3" y1="175.7" x2="744.3" y2="175.7" stroke="#111" stroke-width="0.7" />
<text x="677.3" y="219.8" font-size="5.0" font-weight="700" fill="#111" textLength="29.5" lengthAdjust="spacingAndGlyphs">MEETING 202</text><line x1="677.0" y1="220.7" x2="707.0" y2="220.7" stroke="#111" stroke-width="0.7" />
<text x="714.6" y="219.8" font-size="5.0" font-weight="700" fill="#111" textLength="29.5" lengthAdjust="spacingAndGlyphs">MEETING 204</text><line x1="714.3" y1="220.7" x2="744.3" y2="220.7" stroke="#111" stroke-width="0.7" />
<text x="808.3" y="177.5" font-size="5.0" font-weight="700" fill="#111" textLength="25.4" lengthAdjust="spacingAndGlyphs">OFFICE 205</text><line x1="808.0" y1="178.4" x2="834.0" y2="178.4" stroke="#111" stroke-width="0.7" />
<text x="808.3" y="216.8" font-size="5.0" font-weight="700" fill="#111" textLength="25.4" lengthAdjust="spacingAndGlyphs">OFFICE 206</text><line x1="808.0" y1="217.7" x2="834.0" y2="217.7" stroke="#111" stroke-width="0.7" />
<text x="903.5" y="192.6" font-size="5.0" font-weight="700" fill="#111" textLength="40.5" lengthAdjust="spacingAndGlyphs">CONFERENCE 207</text><line x1="903.2" y1="193.5" x2="944.4" y2="193.5" stroke="#111" stroke-width="0.7" />
<text x="1001.8" y="192.8" font-size="5.0" font-weight="700" fill="#111" textLength="29.5" lengthAdjust="spacingAndGlyphs">MEETING 208</text><line x1="1001.5" y1="193.7" x2="1031.5" y2="193.7" stroke="#111" stroke-width="0.7" />
<text x="1058.3" y="192.8" font-size="5.0" font-weight="700" fill="#111" textLength="29.5" lengthAdjust="spacingAndGlyphs">MEETING 209</text><line x1="1058.0" y1="193.7" x2="1088.0" y2="193.7" stroke="#111" stroke-width="0.7" />
<text x="1112.7" y="189.6" font-size="5.0" font-weight="700" fill="#111" textLength="29.5" lengthAdjust="spacingAndGlyphs">MEETING 210</text><line x1="1112.4" y1="190.5" x2="1142.4" y2="190.5" stroke="#111" stroke-width="0.7" />
<text x="1172.2" y="190.8" font-size="5.0" font-weight="700" fill="#111" textLength="40.3" lengthAdjust="spacingAndGlyphs">CONFERENCE 211</text><line x1="1171.9" y1="191.7" x2="1212.7" y2="191.7" stroke="#111" stroke-width="0.7" />
<text x="1250.3" y="177.8" font-size="5.0" font-weight="700" fill="#111" textLength="25.4" lengthAdjust="spacingAndGlyphs">OFFICE 212</text><line x1="1250.0" y1="178.7" x2="1276.0" y2="178.7" stroke="#111" stroke-width="0.7" />
<text x="1250.3" y="216.8" font-size="5.0" font-weight="700" fill="#111" textLength="25.4" lengthAdjust="spacingAndGlyphs">OFFICE 213</text><line x1="1250.0" y1="217.7" x2="1276.0" y2="217.7" stroke="#111" stroke-width="0.7" />
<text x="1028.8" y="248.8" font-size="5.0" font-weight="700" fill="#111" textLength="35.2" lengthAdjust="spacingAndGlyphs">RECEPTION 255</text><line x1="1028.5" y1="249.7" x2="1064.3" y2="249.7" stroke="#111" stroke-width="0.7" />
<text x="554.3" y="275.8" font-size="5.0" font-weight="700" fill="#111" textLength="29.5" lengthAdjust="spacingAndGlyphs">MEETING 247</text><line x1="554.0" y1="276.7" x2="584.0" y2="276.7" stroke="#111" stroke-width="0.7" />
<text x="551.1" y="334.5" font-size="5.0" font-weight="700" fill="#111" textLength="40.5" lengthAdjust="spacingAndGlyphs">CONFERENCE 246</text><line x1="550.8" y1="335.4" x2="592.0" y2="335.4" stroke="#111" stroke-width="0.7" />
<text x="556.7" y="391.1" font-size="5.0" font-weight="700" fill="#111" textLength="29.5" lengthAdjust="spacingAndGlyphs">MEETING 245</text><line x1="556.4" y1="392.0" x2="586.4" y2="392.0" stroke="#111" stroke-width="0.7" />
<text x="714.2" y="334.5" font-size="5.0" font-weight="700" fill="#111" textLength="39.5" lengthAdjust="spacingAndGlyphs">OPEN OFFICE 248</text><line x1="713.9" y1="335.4" x2="754.1" y2="335.4" stroke="#111" stroke-width="0.7" />
<text x="842.3" y="306.8" font-size="5.0" font-weight="700" fill="#111" textLength="25.4" lengthAdjust="spacingAndGlyphs">OFFICE 249</text><line x1="842.0" y1="307.7" x2="868.0" y2="307.7" stroke="#111" stroke-width="0.7" />
<text x="842.7" y="356.7" font-size="5.0" font-weight="700" fill="#111" textLength="21.6" lengthAdjust="spacingAndGlyphs">COPY 250</text><line x1="842.4" y1="357.6" x2="864.6" y2="357.6" stroke="#111" stroke-width="0.7" />
<text x="582.2" y="457.7" font-size="5.0" font-weight="700" fill="#111" textLength="39.5" lengthAdjust="spacingAndGlyphs">OPEN OFFICE 244</text><line x1="581.9" y1="458.6" x2="622.1" y2="458.6" stroke="#111" stroke-width="0.7" />
<text x="695.8" y="441.6" font-size="5.0" font-weight="700" fill="#111" textLength="25.4" lengthAdjust="spacingAndGlyphs">OFFICE 242</text><line x1="695.5" y1="442.5" x2="721.5" y2="442.5" stroke="#111" stroke-width="0.7" />
<text x="695.8" y="484.3" font-size="5.0" font-weight="700" fill="#111" textLength="25.4" lengthAdjust="spacingAndGlyphs">OFFICE 243</text><line x1="695.5" y1="485.2" x2="721.5" y2="485.2" stroke="#111" stroke-width="0.7" />
<text x="789.7" y="447.4" font-size="5.0" font-weight="700" fill="#111" textLength="25.4" lengthAdjust="spacingAndGlyphs">OFFICE 240</text><line x1="789.4" y1="448.3" x2="815.4" y2="448.3" stroke="#111" stroke-width="0.7" />
<text x="827.9" y="447.4" font-size="5.0" font-weight="700" fill="#111" textLength="25.4" lengthAdjust="spacingAndGlyphs">OFFICE 238</text><line x1="827.6" y1="448.3" x2="853.6" y2="448.3" stroke="#111" stroke-width="0.7" />
<text x="789.7" y="487.7" font-size="5.0" font-weight="700" fill="#111" textLength="25.4" lengthAdjust="spacingAndGlyphs">OFFICE 241</text><line x1="789.4" y1="488.6" x2="815.4" y2="488.6" stroke="#111" stroke-width="0.7" />
<text x="827.9" y="487.7" font-size="5.0" font-weight="700" fill="#111" textLength="25.4" lengthAdjust="spacingAndGlyphs">OFFICE 239</text><line x1="827.6" y1="488.6" x2="853.6" y2="488.6" stroke="#111" stroke-width="0.7" />
<text x="900.9" y="453.8" font-size="5.0" font-weight="700" fill="#111" textLength="25.4" lengthAdjust="spacingAndGlyphs">OFFICE 236</text><line x1="900.6" y1="454.7" x2="926.6" y2="454.7" stroke="#111" stroke-width="0.7" />
<text x="936.1" y="453.8" font-size="5.0" font-weight="700" fill="#111" textLength="29.5" lengthAdjust="spacingAndGlyphs">MEETING 234</text><line x1="935.8" y1="454.7" x2="965.8" y2="454.7" stroke="#111" stroke-width="0.7" />
<text x="900.9" y="491.1" font-size="5.0" font-weight="700" fill="#111" textLength="25.4" lengthAdjust="spacingAndGlyphs">OFFICE 237</text><line x1="900.6" y1="492.0" x2="926.6" y2="492.0" stroke="#111" stroke-width="0.7" />
<text x="936.1" y="491.1" font-size="5.0" font-weight="700" fill="#111" textLength="29.5" lengthAdjust="spacingAndGlyphs">MEETING 235</text><line x1="935.8" y1="492.0" x2="965.8" y2="492.0" stroke="#111" stroke-width="0.7" />
<text x="1029.9" y="474.6" font-size="5.0" font-weight="700" fill="#111" textLength="24.9" lengthAdjust="spacingAndGlyphs">BREAK 233</text><line x1="1029.6" y1="475.5" x2="1055.2" y2="475.5" stroke="#111" stroke-width="0.7" />
<text x="1123.7" y="453.8" font-size="5.0" font-weight="700" fill="#111" textLength="29.5" lengthAdjust="spacingAndGlyphs">MEETING 231</text><line x1="1123.4" y1="454.7" x2="1153.4" y2="454.7" stroke="#111" stroke-width="0.7" />
<text x="1159.8" y="453.8" font-size="5.0" font-weight="700" fill="#111" textLength="25.4" lengthAdjust="spacingAndGlyphs">OFFICE 229</text><line x1="1159.5" y1="454.7" x2="1185.5" y2="454.7" stroke="#111" stroke-width="0.7" />
<text x="1123.7" y="487.0" font-size="5.0" font-weight="700" fill="#111" textLength="29.5" lengthAdjust="spacingAndGlyphs">MEETING 232</text><line x1="1123.4" y1="487.9" x2="1153.4" y2="487.9" stroke="#111" stroke-width="0.7" />
<text x="1160.7" y="487.0" font-size="5.0" font-weight="700" fill="#111" textLength="25.4" lengthAdjust="spacingAndGlyphs">OFFICE 230</text><line x1="1160.4" y1="487.9" x2="1186.4" y2="487.9" stroke="#111" stroke-width="0.7" />
<text x="1235.5" y="440.5" font-size="5.0" font-weight="700" fill="#111" textLength="25.4" lengthAdjust="spacingAndGlyphs">OFFICE 227</text><line x1="1235.2" y1="441.4" x2="1261.2" y2="441.4" stroke="#111" stroke-width="0.7" />
<text x="1235.5" y="488.2" font-size="5.0" font-weight="700" fill="#111" textLength="25.4" lengthAdjust="spacingAndGlyphs">OFFICE 228</text><line x1="1235.2" y1="489.1" x2="1261.2" y2="489.1" stroke="#111" stroke-width="0.7" />
<text x="886.0" y="290.8" font-size="5.0" font-weight="700" fill="#111" textLength="22.1" lengthAdjust="spacingAndGlyphs">STAIR 251</text><line x1="885.7" y1="291.7" x2="908.3" y2="291.7" stroke="#111" stroke-width="0.7" />
<text x="913.9" y="290.8" font-size="5.0" font-weight="700" fill="#111" textLength="37.4" lengthAdjust="spacingAndGlyphs">ELECTRICAL 252</text><line x1="913.6" y1="291.7" x2="951.6" y2="291.7" stroke="#111" stroke-width="0.7" />
<text x="927.2" y="320.0" font-size="5.0" font-weight="700" fill="#111" textLength="34.4" lengthAdjust="spacingAndGlyphs">STORAGE 253A</text><line x1="926.9" y1="320.9" x2="961.9" y2="320.9" stroke="#111" stroke-width="0.7" />
<text x="920.3" y="334.2" font-size="5.0" font-weight="700" fill="#111" textLength="34.4" lengthAdjust="spacingAndGlyphs">STORAGE 254A</text><line x1="920.0" y1="335.1" x2="955.0" y2="335.1" stroke="#111" stroke-width="0.7" />
<text x="933.7" y="375.4" font-size="5.0" font-weight="700" fill="#111" textLength="38.6" lengthAdjust="spacingAndGlyphs">WOMEN'S RR 254</text><line x1="933.4" y1="376.3" x2="972.6" y2="376.3" stroke="#111" stroke-width="0.7" />
<text x="1031.7" y="328.6" font-size="5.0" font-weight="700" fill="#111" textLength="24.6" lengthAdjust="spacingAndGlyphs">LOBBY 256</text><line x1="1031.4" y1="329.5" x2="1056.6" y2="329.5" stroke="#111" stroke-width="0.7" />
<text x="1122.3" y="278.8" font-size="5.0" font-weight="700" fill="#111" textLength="27.4" lengthAdjust="spacingAndGlyphs">SERVER 257</text><line x1="1122.0" y1="279.7" x2="1150.0" y2="279.7" stroke="#111" stroke-width="0.7" />
<text x="1134.8" y="337.5" font-size="5.0" font-weight="700" fill="#111" textLength="34.4" lengthAdjust="spacingAndGlyphs">STORAGE 258A</text><line x1="1134.5" y1="338.4" x2="1169.5" y2="338.4" stroke="#111" stroke-width="0.7" />
<text x="1123.0" y="376.0" font-size="5.0" font-weight="700" fill="#111" textLength="30.8" lengthAdjust="spacingAndGlyphs">MEN'S RR 259</text><line x1="1122.7" y1="376.9" x2="1154.1" y2="376.9" stroke="#111" stroke-width="0.7" />
<text x="1179.9" y="376.0" font-size="5.0" font-weight="700" fill="#111" textLength="22.1" lengthAdjust="spacingAndGlyphs">STAIR 259</text><line x1="1179.6" y1="376.9" x2="1202.2" y2="376.9" stroke="#111" stroke-width="0.7" />
<text x="1222.5" y="306.6" font-size="5.0" font-weight="700" fill="#111" textLength="25.4" lengthAdjust="spacingAndGlyphs">OFFICE 261</text><line x1="1222.2" y1="307.5" x2="1248.2" y2="307.5" stroke="#111" stroke-width="0.7" />
<text x="1222.7" y="357.1" font-size="5.0" font-weight="700" fill="#111" textLength="21.6" lengthAdjust="spacingAndGlyphs">COPY 262</text><line x1="1222.4" y1="358.0" x2="1244.6" y2="358.0" stroke="#111" stroke-width="0.7" />
<g transform="rotate(-90 896.3 367.0)"><text x="875.9" y="368.8" font-size="5.0" font-weight="700" fill="#111" textLength="40.8" lengthAdjust="spacingAndGlyphs">MOTHER'S RM 255</text><line x1="875.6" y1="369.7" x2="917.0" y2="369.7" stroke="#111" stroke-width="0.7" /></g>
<g transform="rotate(-90 1191.6 298.7)"><text x="1174.8" y="300.6" font-size="5.4" font-weight="700" fill="#111" textLength="33.6" lengthAdjust="spacingAndGlyphs">STORAGE 260</text><line x1="1174.5" y1="301.5" x2="1208.7" y2="301.5" stroke="#111" stroke-width="0.7" /></g>
<text x="1273.1" y="440.5" font-size="5.0" font-weight="700" fill="#111" textLength="25.4" lengthAdjust="spacingAndGlyphs">OFFICE 226</text><line x1="1272.8" y1="441.4" x2="1298.8" y2="441.4" stroke="#111" stroke-width="0.7" /><text x="1273.1" y="488.2" font-size="5.0" font-weight="700" fill="#111" textLength="25.4" lengthAdjust="spacingAndGlyphs">OFFICE 225</text><line x1="1272.8" y1="489.1" x2="1298.8" y2="489.1" stroke="#111" stroke-width="0.7" />
</g>
<g id="markups">
<rect x="637.8" y="281" width="234.6" height="100.4" rx="3.5" fill="none" stroke="#cc4a50" stroke-width="1.3"/>
<text x="773.4" y="335.0" font-size="6.4" font-weight="700" fill="#e0242a" textLength="35.8" lengthAdjust="spacingAndGlyphs">160.89 sq m</text>
<text x="809.5" y="186.2" font-size="4.6" fill="#e0242a" textLength="23.0" lengthAdjust="spacingAndGlyphs">204.62 sf</text>
<text x="1254.5" y="169.6" font-size="4.6" fill="#e0242a" textLength="22.5" lengthAdjust="spacingAndGlyphs">204.51 sf</text>
<text x="923.8" y="200" font-size="4" text-anchor="middle" fill="#222" class="serif">23.15 sq m</text>
<line x1="1100.0" y1="134.0" x2="1211.0" y2="134.0" stroke="#e0242a" stroke-width="1" />
<path d="M1100,134 l5,-1.9 v3.8 Z M1211,134 l-5,-1.9 v3.8 Z" fill="#e0242a" stroke="#e0242a" stroke-width="0.4" />
<line x1="1100.0" y1="131.0" x2="1100.0" y2="137.0" stroke="#e0242a" stroke-width="0.8" /><line x1="1211.0" y1="131.0" x2="1211.0" y2="137.0" stroke="#e0242a" stroke-width="0.8" />
<text x="1155.5" y="135.4" font-size="4.4" text-anchor="middle" fill="#e0242a">30'-0"</text>
<path d="M1042.00,160.80 A2.42,2.42 0 0 1 1046.33,160.80 A2.42,2.42 0 0 1 1050.66,160.80 A2.42,2.42 0 0 1 1054.99,160.80 A2.42,2.42 0 0 1 1059.31,160.80 A2.42,2.42 0 0 1 1063.64,160.80 A2.42,2.42 0 0 1 1067.97,160.80 A2.42,2.42 0 0 1 1072.30,160.80 A2.42,2.42 0 0 1 1076.63,160.80 A2.42,2.42 0 0 1 1080.96,160.80 A2.42,2.42 0 0 1 1085.29,160.80 A2.42,2.42 0 0 1 1089.61,160.80 A2.42,2.42 0 0 1 1093.94,160.80 A2.42,2.42 0 0 1 1098.27,160.80 A2.42,2.42 0 0 1 1102.60,160.80 A2.36,2.36 0 0 1 1102.60,165.01 A2.36,2.36 0 0 1 1102.60,169.23 A2.36,2.36 0 0 1 1102.60,173.44 A2.36,2.36 0 0 1 1102.60,177.65 A2.36,2.36 0 0 1 1102.60,181.87 A2.36,2.36 0 0 1 1102.60,186.08 A2.36,2.36 0 0 1 1102.60,190.29 A2.36,2.36 0 0 1 1102.60,194.51 A2.36,2.36 0 0 1 1102.60,198.72 A2.36,2.36 0 0 1 1102.60,202.93 A2.36,2.36 0 0 1 1102.60,207.15 A2.36,2.36 0 0 1 1102.60,211.36 A2.36,2.36 0 0 1 1102.60,215.57 A2.36,2.36 0 0 1 1102.60,219.79 A2.36,2.36 0 0 1 1102.60,224.00 A2.31,2.31 0 0 1 1098.48,224.00 A2.31,2.31 0 0 1 1094.36,224.00 A2.31,2.31 0 0 1 1090.24,224.00 A2.31,2.31 0 0 1 1086.12,224.00 A2.31,2.31 0 0 1 1082.00,224.00 A2.16,2.16 0 0 1 1081.51,220.17 A2.25,2.25 0 0 1 1080.04,216.43 A2.40,2.40 0 0 1 1077.64,212.88 A2.60,2.60 0 0 1 1074.36,209.60 A2.81,2.81 0 0 1 1070.28,206.68 A3.02,3.02 0 0 1 1065.51,204.18 A3.20,3.20 0 0 1 1060.16,202.17 A3.35,3.35 0 0 1 1054.36,200.70 A3.45,3.45 0 0 1 1048.26,199.80 A3.51,3.51 0 0 1 1042.00,199.50 A2.41,2.41 0 0 1 1042.00,195.20 A2.41,2.41 0 0 1 1042.00,190.90 A2.41,2.41 0 0 1 1042.00,186.60 A2.41,2.41 0 0 1 1042.00,182.30 A2.41,2.41 0 0 1 1042.00,178.00 A2.41,2.41 0 0 1 1042.00,173.70 A2.41,2.41 0 0 1 1042.00,169.40 A2.41,2.41 0 0 1 1042.00,165.10 A2.41,2.41 0 0 1 1042.00,160.80Z" fill="none" stroke="#ec4a4a" stroke-width="0.8" stroke-linejoin="round"/>
<text x="1044.5" y="215.1" font-size="7.2" font-weight="700" text-anchor="middle" fill="#e0242a" class="serif" textLength="31" lengthAdjust="spacingAndGlyphs">Room 001</text>
<path d="M1051.8,207.4 V201.6 M1050.4,203.6 l1.4,-2.2 l1.4,2.2" fill="none" stroke="#e0242a" stroke-width="0.6" />
<path d="M994.20,280.50 A1.98,1.98 0 0 1 997.74,280.50 A1.98,1.98 0 0 1 1001.28,280.50 A1.98,1.98 0 0 1 1004.81,280.50 A1.98,1.98 0 0 1 1008.35,280.50 A1.98,1.98 0 0 1 1011.89,280.50 A1.98,1.98 0 0 1 1015.42,280.50 A1.98,1.98 0 0 1 1018.96,280.50 A1.98,1.98 0 0 1 1022.50,280.50 A2.04,2.04 0 0 1 1022.50,284.15 A2.04,2.04 0 0 1 1022.50,287.79 A2.04,2.04 0 0 1 1022.50,291.44 A2.04,2.04 0 0 1 1022.50,295.09 A2.04,2.04 0 0 1 1022.50,298.74 A2.04,2.04 0 0 1 1022.50,302.38 A2.04,2.04 0 0 1 1022.50,306.03 A2.04,2.04 0 0 1 1022.50,309.68 A2.04,2.04 0 0 1 1022.50,313.33 A2.04,2.04 0 0 1 1022.50,316.97 A2.04,2.04 0 0 1 1022.50,320.62 A2.04,2.04 0 0 1 1022.50,324.27 A2.04,2.04 0 0 1 1022.50,327.92 A2.04,2.04 0 0 1 1022.50,331.56 A2.04,2.04 0 0 1 1022.50,335.21 A2.04,2.04 0 0 1 1022.50,338.86 A2.04,2.04 0 0 1 1022.50,342.51 A2.04,2.04 0 0 1 1022.50,346.15 A2.04,2.04 0 0 1 1022.50,349.80 A1.98,1.98 0 0 1 1018.96,349.80 A1.98,1.98 0 0 1 1015.42,349.80 A1.98,1.98 0 0 1 1011.89,349.80 A1.98,1.98 0 0 1 1008.35,349.80 A1.98,1.98 0 0 1 1004.81,349.80 A1.98,1.98 0 0 1 1001.28,349.80 A1.98,1.98 0 0 1 997.74,349.80 A1.98,1.98 0 0 1 994.20,349.80 A2.04,2.04 0 0 1 994.20,346.15 A2.04,2.04 0 0 1 994.20,342.51 A2.04,2.04 0 0 1 994.20,338.86 A2.04,2.04 0 0 1 994.20,335.21 A2.04,2.04 0 0 1 994.20,331.56 A2.04,2.04 0 0 1 994.20,327.92 A2.04,2.04 0 0 1 994.20,324.27 A2.04,2.04 0 0 1 994.20,320.62 A2.04,2.04 0 0 1 994.20,316.97 A2.04,2.04 0 0 1 994.20,313.33 A2.04,2.04 0 0 1 994.20,309.68 A2.04,2.04 0 0 1 994.20,306.03 A2.04,2.04 0 0 1 994.20,302.38 A2.04,2.04 0 0 1 994.20,298.74 A2.04,2.04 0 0 1 994.20,295.09 A2.04,2.04 0 0 1 994.20,291.44 A2.04,2.04 0 0 1 994.20,287.79 A2.04,2.04 0 0 1 994.20,284.15 A2.04,2.04 0 0 1 994.20,280.50Z" fill="none" stroke="#e0242a" stroke-width="0.7" stroke-linejoin="round"/>
<line x1="1023.0" y1="317.5" x2="1030.0" y2="317.5" stroke="#e0242a" stroke-width="0.6" />
<text x="1030.6" y="317.4" font-size="3.9" font-weight="700" fill="#e0242a" textLength="26.2" lengthAdjust="spacingAndGlyphs">Split into three</text>
<path d="M1101.50,284.00 A2.48,2.48 0 0 1 1106.46,284.00 A2.48,2.48 0 0 1 1111.42,284.00 A2.48,2.48 0 0 1 1116.38,284.00 A2.48,2.48 0 0 1 1121.35,284.00 A2.48,2.48 0 0 1 1126.31,284.00 A2.48,2.48 0 0 1 1131.27,284.00 A2.48,2.48 0 0 1 1136.23,284.00 A2.48,2.48 0 0 1 1141.19,284.00 A2.48,2.48 0 0 1 1146.15,284.00 A2.48,2.48 0 0 1 1151.12,284.00 A2.48,2.48 0 0 1 1156.08,284.00 A2.48,2.48 0 0 1 1161.04,284.00 A2.48,2.48 0 0 1 1166.00,284.00 A2.49,2.49 0 0 1 1166.00,288.98 A2.49,2.49 0 0 1 1166.00,293.96 A2.49,2.49 0 0 1 1166.00,298.93 A2.49,2.49 0 0 1 1166.00,303.91 A2.49,2.49 0 0 1 1166.00,308.89 A2.49,2.49 0 0 1 1166.00,313.87 A2.49,2.49 0 0 1 1166.00,318.84 A2.49,2.49 0 0 1 1166.00,323.82 A2.49,2.49 0 0 1 1166.00,328.80 A2.48,2.48 0 0 1 1161.04,328.80 A2.48,2.48 0 0 1 1156.08,328.80 A2.48,2.48 0 0 1 1151.12,328.80 A2.48,2.48 0 0 1 1146.15,328.80 A2.48,2.48 0 0 1 1141.19,328.80 A2.48,2.48 0 0 1 1136.23,328.80 A2.48,2.48 0 0 1 1131.27,328.80 A2.48,2.48 0 0 1 1126.31,328.80 A2.48,2.48 0 0 1 1121.35,328.80 A2.48,2.48 0 0 1 1116.38,328.80 A2.48,2.48 0 0 1 1111.42,328.80 A2.48,2.48 0 0 1 1106.46,328.80 A2.48,2.48 0 0 1 1101.50,328.80 A2.49,2.49 0 0 1 1101.50,323.82 A2.49,2.49 0 0 1 1101.50,318.84 A2.49,2.49 0 0 1 1101.50,313.87 A2.49,2.49 0 0 1 1101.50,308.89 A2.49,2.49 0 0 1 1101.50,303.91 A2.49,2.49 0 0 1 1101.50,298.93 A2.49,2.49 0 0 1 1101.50,293.96 A2.49,2.49 0 0 1 1101.50,288.98 A2.49,2.49 0 0 1 1101.50,284.00Z" fill="none" stroke="#e8474c" stroke-width="0.7" stroke-linejoin="round"/>
<text x="1138.0" y="307.6" font-size="3.4" fill="#c02020" textLength="25.0" lengthAdjust="spacingAndGlyphs">Requirements</text>
<line x1="1138.0" y1="308.4" x2="1163.0" y2="308.4" stroke="#c02020" stroke-width="0.4" />
</g>
<g id="titleblock">
<path d="M476.5,695.5 H1290 M476.5,773.5 H1290" fill="none" stroke="#222" stroke-width="1" />
<line x1="773.4" y1="695.5" x2="773.4" y2="773.5" stroke="#222" stroke-width="1" />
<line x1="869.6" y1="695.5" x2="869.6" y2="773.5" stroke="#222" stroke-width="1" />
<line x1="964.7" y1="695.5" x2="964.7" y2="773.5" stroke="#222" stroke-width="1" />
<line x1="1060.4" y1="695.5" x2="1060.4" y2="773.5" stroke="#222" stroke-width="1" />
<line x1="1156.2" y1="695.5" x2="1156.2" y2="773.5" stroke="#222" stroke-width="1" />
<line x1="1251.6" y1="695.5" x2="1251.6" y2="773.5" stroke="#222" stroke-width="1" />
<rect x="481.2" y="699.7" width="127.3" height="68.7" fill="none" stroke="#8fa9b6" stroke-width="1.2" />
<rect x="483.4" y="701.9" width="122.9" height="64.3" fill="none" stroke="#8fa9b6" stroke-width="0.6" />
<text transform="translate(498 727.9) scale(0.68 1)" x="0" y="0" font-size="14" font-weight="700" fill="#2f5f72" stroke="#2f5f72" stroke-width="0.7" textLength="138.5" lengthAdjust="spacing">BRIGHTER</text>
<text transform="translate(498 741.8) scale(0.68 1)" x="0" y="0" font-size="14" font-weight="700" fill="#2f5f72" stroke="#2f5f72" stroke-width="0.7" textLength="138.5" lengthAdjust="spacing">GRAPHICS</text>
<text x="507.2" y="751.6" font-size="3.1" font-weight="700" fill="#2f5f72" stroke="#2f5f72" stroke-width="0.25" textLength="76" lengthAdjust="spacing">DIGITIZING CONSTRUCTION SINCE 2002</text>
<path d="M615.2,716.2 H620.4 V741.6 H640.4 V720.8 H625.5 V716.2 H645 V746.4 H615.2 Z" fill="#1178d4"/>
<rect x="625.5" y="725.6" width="9.9" height="10.5" fill="#1178d4"/>
<text x="653" y="741.6" font-size="27.6" font-weight="700" fill="#1178d4" stroke="#1178d4" stroke-width="0.5" textLength="110" lengthAdjust="spacingAndGlyphs">BLUEBEAM</text>
<text x="765.3" y="724.5" font-size="2.6" fill="#1178d4">®</text>
<text x="653.0" y="752.3" font-size="6.8" font-weight="700" fill="#222" textLength="59.3" lengthAdjust="spacingAndGlyphs">Platinum Partner</text>
<text x="781.2" y="705.6" font-size="7.8" font-weight="700" fill="#111" textLength="69.4" lengthAdjust="spacingAndGlyphs">Capture Engineers</text><text x="781.2" y="714.2" font-size="7.8" fill="#111" textLength="39.5" lengthAdjust="spacingAndGlyphs">Mechanical</text><text x="781.2" y="722.8" font-size="7.8" fill="#111" textLength="31.6" lengthAdjust="spacingAndGlyphs">Electrical</text><text x="781.2" y="731.4" font-size="7.8" fill="#111" textLength="32.5" lengthAdjust="spacingAndGlyphs">Plumbing</text><text x="781.2" y="749.0" font-size="7.8" fill="#111" textLength="49.9" lengthAdjust="spacingAndGlyphs">1234 Miller St.</text><text x="781.2" y="757.8" font-size="7.8" fill="#111" textLength="79.8" lengthAdjust="spacingAndGlyphs">Manchester, NH 06930</text>
<text x="879.9" y="705.3" font-size="7.8" font-weight="700" fill="#111" textLength="73.8" lengthAdjust="spacingAndGlyphs">REVU ARCHITECTS</text><text x="879.9" y="722.7" font-size="7.8" fill="#111" textLength="59.8" lengthAdjust="spacingAndGlyphs">5555 N. Broad St</text><text x="879.9" y="731.6" font-size="7.8" fill="#111" textLength="71.0" lengthAdjust="spacingAndGlyphs">Pasadena CA 91101</text>
<text x="972.2" y="705.3" font-size="7.8" font-weight="700" fill="#111" textLength="68.5" lengthAdjust="spacingAndGlyphs">OFFICE BUILDING</text><text x="972.2" y="722.7" font-size="7.8" fill="#111" textLength="66.8" lengthAdjust="spacingAndGlyphs">Project No: 323232</text><text x="972.2" y="740.2" font-size="7.8" fill="#111" textLength="56.8" lengthAdjust="spacingAndGlyphs">Project Address:</text><text x="972.2" y="749.1" font-size="7.8" fill="#111" textLength="59.4" lengthAdjust="spacingAndGlyphs">123 Schonsett St</text><text x="972.2" y="758.0" font-size="7.8" fill="#111" textLength="63.0" lengthAdjust="spacingAndGlyphs">Chicago, IL 60601</text>
<text x="1065.6" y="705.4" font-size="3.4" font-weight="700" fill="#111" textLength="39.0" lengthAdjust="spacingAndGlyphs">LEGAL DISCLAIMER:</text>
<text x="1065.6" y="714.0" font-size="3.4" fill="#222" textLength="86.5" lengthAdjust="spacingAndGlyphs">ALL IDEAS, DESIGNS, AND PLANS INDICATED</text>
<text x="1065.6" y="718.5" font-size="3.4" fill="#222" textLength="80.0" lengthAdjust="spacingAndGlyphs">OR REPRESENTED BY THESE DRAWINGS</text>
<text x="1065.6" y="723.1" font-size="3.4" fill="#222" textLength="81.0" lengthAdjust="spacingAndGlyphs">ARE OWNED AND ARE THE PROPERTY OF</text>
<text x="1065.6" y="727.6" font-size="3.4" fill="#222" textLength="82.9" lengthAdjust="spacingAndGlyphs">BLUEBEAM, INC. AND WERE CREATED AND</text>
<text x="1065.6" y="732.1" font-size="3.4" fill="#222" textLength="69.2" lengthAdjust="spacingAndGlyphs">DEVELOPED FOR DEMONSTRATION</text>
<text x="1065.6" y="736.6" font-size="3.4" fill="#222" textLength="79.7" lengthAdjust="spacingAndGlyphs">PURPOSES ONLY. NONE OF SUCH IDEAS,</text>
<text x="1065.6" y="741.2" font-size="3.4" fill="#222" textLength="81.5" lengthAdjust="spacingAndGlyphs">DESIGNS, OR PLANS SHALL BE USED FOR</text>
<text x="1065.6" y="745.7" font-size="3.4" fill="#222" textLength="84.1" lengthAdjust="spacingAndGlyphs">ANY PURPOSE WHATSOEVER EXCEPT AS A</text>
<text x="1065.6" y="750.2" font-size="3.4" fill="#222" textLength="71.7" lengthAdjust="spacingAndGlyphs">DEMONSTRATION SET WITHOUT THE</text>
<text x="1065.6" y="754.8" font-size="3.4" fill="#222" textLength="70.6" lengthAdjust="spacingAndGlyphs">EXPRESSED WRITTEN CONCENT OF</text>
<text x="1065.6" y="759.3" font-size="3.4" fill="#222" textLength="31.7" lengthAdjust="spacingAndGlyphs">BLUEBEAM, INC.</text>
<text x="1167.0" y="701.2" font-size="3.2" fill="#333" textLength="7.9" lengthAdjust="spacingAndGlyphs">DATE</text>
<text x="1225.6" y="701.2" font-size="3.2" fill="#333" textLength="15.2" lengthAdjust="spacingAndGlyphs">02/26/2018</text>
<line x1="1166.5" y1="702.2" x2="1241.3" y2="702.2" stroke="#333" stroke-width="0.5" />
<text x="1167.0" y="706.5" font-size="3.2" fill="#333" textLength="19.4" lengthAdjust="spacingAndGlyphs">ISSUED FOR:</text>
<text x="1213.0" y="706.5" font-size="3.2" fill="#333" textLength="27.8" lengthAdjust="spacingAndGlyphs">INTERNAL REVIEW</text>
<line x1="1166.5" y1="707.5" x2="1241.3" y2="707.5" stroke="#333" stroke-width="0.5" />
<text x="1167.0" y="716.2" font-size="3.2" fill="#333" textLength="14.7" lengthAdjust="spacingAndGlyphs">PROJECT:</text>
<text x="1234.0" y="716.2" font-size="3.2" fill="#333" textLength="6.8" lengthAdjust="spacingAndGlyphs">3232</text>
<line x1="1166.5" y1="717.2" x2="1241.3" y2="717.2" stroke="#333" stroke-width="0.5" />
<text x="1167.0" y="721.3" font-size="3.2" fill="#333" textLength="16.9" lengthAdjust="spacingAndGlyphs">DRAWN BY:</text>
<text x="1231.8" y="721.3" font-size="3.2" fill="#333" textLength="9.0" lengthAdjust="spacingAndGlyphs">Author</text>
<line x1="1166.5" y1="722.3" x2="1241.3" y2="722.3" stroke="#333" stroke-width="0.5" />
<text x="1167.0" y="726.4" font-size="3.2" fill="#333" textLength="20.4" lengthAdjust="spacingAndGlyphs">CHECKED BY:</text>
<text x="1229.5" y="726.4" font-size="3.2" fill="#333" textLength="11.3" lengthAdjust="spacingAndGlyphs">Checker</text>
<line x1="1166.5" y1="727.4" x2="1241.3" y2="727.4" stroke="#333" stroke-width="0.5" />
<text x="1167.0" y="731.5" font-size="3.2" fill="#333" textLength="22.5" lengthAdjust="spacingAndGlyphs">APPROVED BY:</text>
<text x="1228.5" y="731.5" font-size="3.2" fill="#333" textLength="12.3" lengthAdjust="spacingAndGlyphs">Approver</text>
<line x1="1166.5" y1="732.5" x2="1241.3" y2="732.5" stroke="#333" stroke-width="0.5" />
<rect x="1166.5" y="732.8" width="74.8" height="4.8" fill="none" stroke="#222" stroke-width="0.7" />
<line x1="1185.5" y1="732.8" x2="1185.5" y2="737.6" stroke="#222" stroke-width="0.6" /><line x1="1204.0" y1="732.8" x2="1204.0" y2="737.6" stroke="#222" stroke-width="0.6" />
<text x="1176" y="736.6" font-size="2.8" text-anchor="middle" fill="#333">#</text><text x="1194.7" y="736.6" font-size="2.8" text-anchor="middle" fill="#333">DATE</text><text x="1222.5" y="736.6" font-size="2.8" text-anchor="middle" fill="#333">DESCRIPTION</text>
<text x="1275.8" y="728.6" font-size="10.6" font-weight="700" fill="#111">NOT FOR</text>
<text x="1257.8" y="740.2" font-size="10.6" font-weight="700" fill="#111">CONSTRUCTION</text>
</g>
</g></svg>
<svg id="icons" style="z-index:5" width="1340" height="850" viewBox="0 0 1340 850">
<clipPath id="logoclip"><rect x="1020" y="0" width="34" height="18.6"/></clipPath><g id="logo" clip-path="url(#logoclip)"><circle cx="1036.6" cy="8.4" r="10.5" fill="#fff"/><path d="M1033.6,-1.5 C1030.3,3 1028.7,9 1028.9,15.5" fill="none" stroke="#000" stroke-width="2.3"/><path d="M1044.2,1.2 C1045.4,5.6 1043,9 1038.8,9.9 C1036,10.5 1033.6,10.9 1031.3,11.7 L1037.8,19.8" fill="none" stroke="#000" stroke-width="2.5" stroke-linejoin="miter"/></g>
<path d="M1231.5,9 H1246" fill="none" stroke="#f2f2f2" stroke-width="1.5" stroke-linejoin="round" stroke-linecap="round" />
<path d="M1273.5,6.5 H1284.5 V16.5 H1273.5 Z M1277,6.5 V3 H1288 V13 H1284.5" fill="none" stroke="#f2f2f2" stroke-width="1.4" stroke-linejoin="round" stroke-linecap="round" />
<path d="M1317,3 L1330,15.5 M1330,3 L1317,15.5" fill="none" stroke="#f2f2f2" stroke-width="1.4" stroke-linejoin="round" stroke-linecap="round" />
<path d="M11.7,27.4 H19.7 L24.4,32.2 V43.9 H11.7 Z M19.7,27.4 V32.2 H24.4" fill="none" stroke="#f2f2f2" stroke-width="1.6" stroke-linejoin="round" stroke-linecap="round" />
<path d="M15.3,35.9 H20.6 V41.2 H15.3 Z M17.3,38.6 h1.4" fill="none" stroke="#f2f2f2" stroke-width="1.1" stroke-linejoin="round" stroke-linecap="round" />
<path d="M35,33.8 L38.5,37.3 L42,33.8" fill="none" stroke="#f2f2f2" stroke-width="1.4" stroke-linejoin="round" stroke-linecap="round" />
<path d="M312.6,28.3 H320 L325.6,33.8 V44 H312.6 Z M320,28.3 V33.8 H325.6" fill="none" stroke="#f2f2f2" stroke-width="1.5" stroke-linejoin="round" stroke-linecap="round" />
<path d="M325.8,39.3 V45 M323,42.1 H328.6" fill="none" stroke="#cdb94a" stroke-width="1.5" stroke-linejoin="round" stroke-linecap="round" />
<path d="M113.5,66 L117.3,69.8 L121,66" fill="none" stroke="#f2f2f2" stroke-width="1.5" stroke-linejoin="round" stroke-linecap="round" />
<path d="M7.2,64.5 H25.2 V74 H7.2 Z" fill="none" stroke="#f2f2f2" stroke-width="1.4" stroke-linejoin="round" stroke-linecap="round" />
<path d="M10.3,64.5 V70 M13.3,64.5 V68.3 M16.3,64.5 V70 M19.3,64.5 V68.3 M22.3,64.5 V70" fill="none" stroke="#f2f2f2" stroke-width="1.2" stroke-linejoin="round" stroke-linecap="round" />
<path d="M9.8,93.5 H23 V110 H9.8 Z M9.8,101.7 H23" fill="none" stroke="#f2f2f2" stroke-width="1.4" stroke-linejoin="round" stroke-linecap="round" />
<path d="M13.5,96 V97.5 H19.3 V96 M13.5,104.3 V105.8 H19.3 V104.3" fill="none" stroke="#f2f2f2" stroke-width="1.1" stroke-linejoin="round" stroke-linecap="round" />
<path d="M8.3,126.3 h6.6 v6.6 h-6.6 z M17.8,126.3 h6.6 v6.6 h-6.6 z M8.3,135.6 h6.6 v6.6 h-6.6 z M17.8,135.6 h6.6 v6.6 h-6.6 z" fill="none" stroke="#f2f2f2" stroke-width="1.3" stroke-linejoin="round" stroke-linecap="round" />
<path d="M10.3,158 H22.8 V174.5 H10.3 Z" fill="none" stroke="#f2f2f2" stroke-width="1.4" stroke-linejoin="round" stroke-linecap="round" />
<path d="M13.3,158 V168.2 L15.9,165.8 L18.5,168.2 V158" fill="none" stroke="#f2f2f2" stroke-width="1.2" stroke-linejoin="round" stroke-linecap="round" />
<path d="M10.3,171.5 H22.8" fill="none" stroke="#f2f2f2" stroke-width="1.0" stroke-linejoin="round" stroke-linecap="round" />
<path d="M7.8,190.5 H24.8 V200.5 H19.5 V206.5 H7.8 Z" fill="none" stroke="#f2f2f2" stroke-width="1.4" stroke-linejoin="round" stroke-linecap="round" />
<path d="M7.8,197.5 H12.5 M16,190.5 V195.5 M19.5,200.5 H16.5 M12.5,206.5 V203" fill="none" stroke="#f2f2f2" stroke-width="1.2" stroke-linejoin="round" stroke-linecap="round" />
<path d="M7.8,227 H25 V239.5 H7.8 Z M7.8,232.7 H25" fill="none" stroke="#f2f2f2" stroke-width="1.4" stroke-linejoin="round" stroke-linecap="round" />
<path d="M12.3,227 V223.6 Q12.3,222.6 13.3,222.6 H19.5 Q20.5,222.6 20.5,223.6 V227" fill="none" stroke="#f2f2f2" stroke-width="1.4" stroke-linejoin="round" stroke-linecap="round" />
<path d="M14.8,231.3 H18 V234.3 H14.8 Z" fill="none" stroke="#f2f2f2" stroke-width="1.0" stroke-linejoin="round" stroke-linecap="round" />
<path d="M23.18,261.99 L24.95,262.37 L24.95,264.23 L23.18,264.61 L22.63,266.28 L23.84,267.63 L22.75,269.13 L21.09,268.40 L19.67,269.43 L19.86,271.24 L18.09,271.81 L17.18,270.24 L15.42,270.24 L14.51,271.81 L12.74,271.24 L12.93,269.43 L11.51,268.40 L9.85,269.13 L8.76,267.63 L9.97,266.28 L9.42,264.61 L7.65,264.23 L7.65,262.37 L9.42,261.99 L9.97,260.32 L8.76,258.97 L9.85,257.47 L11.51,258.20 L12.93,257.17 L12.74,255.36 L14.51,254.79 L15.42,256.36 L17.18,256.36 L18.09,254.79 L19.86,255.36 L19.67,257.17 L21.09,258.20 L22.75,257.47 L23.84,258.97 L22.63,260.32Z" fill="none" stroke="#f2f2f2" stroke-width="1.3" stroke-linejoin="round"/><circle cx="16.3" cy="263.3" r="4.4" fill="none" stroke="#f2f2f2" stroke-width="1.3"/>
<path d="M19.5,296 V303.3 H8.3 V287.8 H19.5 V289" fill="none" stroke="#f2f2f2" stroke-width="1.3" stroke-linejoin="round" stroke-linecap="round" />
<path d="M10.5,291 H16.5 M10.5,294 H15 M10.5,297 H13" fill="none" stroke="#f2f2f2" stroke-width="1.1" stroke-linejoin="round" stroke-linecap="round" />
<path d="M22.3,289.3 L24.6,291.6 L16.5,299.7 L13.6,300.4 L14.3,297.5 Z" fill="none" stroke="#f2f2f2" stroke-width="1.1" stroke-linejoin="round" stroke-linecap="round" />
<path d="M8,336.3 H24.8" fill="none" stroke="#f2f2f2" stroke-width="1.3" stroke-linejoin="round" stroke-linecap="round" />
<path d="M10.5,332.8 L12.3,326 L17.5,322.5 L21.3,326.5 L18,331.3 Z M10.5,332.8 L14.8,328.5 M17.5,322.5 L19,320.3 M21.3,326.5 L23.5,325" fill="none" stroke="#f2f2f2" stroke-width="1.1" stroke-linejoin="round" stroke-linecap="round" />
<path d="M8.3,360.3 L13.3,354.5 H24.8 V366 H13.3 Z" fill="none" stroke="#f2f2f2" stroke-width="1.4" stroke-linejoin="round" stroke-linecap="round" />
<path d="M10.2,384.5 H22.5 L24.8,393.3 H7.8 Z M12.3,386.8 H20.3 L21.3,391 H11.3 Z" fill="none" stroke="#f2f2f2" stroke-width="1.2" stroke-linejoin="round" stroke-linecap="round" />
<path d="M7.8,395.8 H24.8 M7.8,398.3 H24.8 M7.8,400.8 H24.8" fill="none" stroke="#f2f2f2" stroke-width="1.2" stroke-linejoin="round" stroke-linecap="round" />
<circle cx="13.8" cy="422" r="5.3" fill="none" stroke="#f2f2f2" stroke-width="1.4"/>
<path d="M17.8,426 L24.3,432.5" fill="none" stroke="#f2f2f2" stroke-width="1.6" stroke-linejoin="round" stroke-linecap="round" />
<path d="M8,454.5 L13.5,449.8 L22,449.2 L24.8,453.3 L24,463.5 L16,465.3 L8.3,463.5 Z" fill="none" stroke="#f2f2f2" stroke-width="1.3" stroke-linejoin="round" stroke-linecap="round" />
<path d="M11.3,464 V458.8 H14.8 V464.8" fill="none" stroke="#f2f2f2" stroke-width="1.1" stroke-linejoin="round" stroke-linecap="round" />
<path d="M16.3,482.3 L24,486.8 L16.3,491.3 L8.6,486.8 Z" fill="none" stroke="#f2f2f2" stroke-width="1.3" stroke-linejoin="round" stroke-linecap="round" />
<path d="M8.6,491.3 L16.3,496.3 L24,491.3" fill="none" stroke="#f2f2f2" stroke-width="1.3" stroke-linejoin="round" stroke-linecap="round" />
<path d="M13.5,796.5 H23.5 M13.5,801.5 H23.5 M13.5,806.5 H23.5" fill="none" stroke="#f2f2f2" stroke-width="2.0" stroke-linejoin="round" stroke-linecap="round" stroke-linecap="butt"/>
<path d="M8.6,796.5 H10.6 M8.6,801.5 H10.6 M8.6,806.5 H10.6" fill="none" stroke="#f2f2f2" stroke-width="2.0" stroke-linejoin="round" stroke-linecap="round" />
<path d="M385.48,98.19 L387.25,98.57 L387.25,100.43 L385.48,100.81 L384.93,102.48 L386.14,103.83 L385.05,105.33 L383.39,104.60 L381.97,105.63 L382.16,107.44 L380.39,108.01 L379.48,106.44 L377.72,106.44 L376.81,108.01 L375.04,107.44 L375.23,105.63 L373.81,104.60 L372.15,105.33 L371.06,103.83 L372.27,102.48 L371.72,100.81 L369.95,100.43 L369.95,98.57 L371.72,98.19 L372.27,96.52 L371.06,95.17 L372.15,93.67 L373.81,94.40 L375.23,93.37 L375.04,91.56 L376.81,90.99 L377.72,92.56 L379.48,92.56 L380.39,90.99 L382.16,91.56 L381.97,93.37 L383.39,94.40 L385.05,93.67 L386.14,95.17 L384.93,96.52Z" fill="none" stroke="#f2f2f2" stroke-width="1.3" stroke-linejoin="round"/><circle cx="378.6" cy="99.5" r="4.4" fill="none" stroke="#f2f2f2" stroke-width="1.3"/>
<path d="M385.48,170.29 L387.25,170.67 L387.25,172.53 L385.48,172.91 L384.93,174.58 L386.14,175.93 L385.05,177.43 L383.39,176.70 L381.97,177.73 L382.16,179.54 L380.39,180.11 L379.48,178.54 L377.72,178.54 L376.81,180.11 L375.04,179.54 L375.23,177.73 L373.81,176.70 L372.15,177.43 L371.06,175.93 L372.27,174.58 L371.72,172.91 L369.95,172.53 L369.95,170.67 L371.72,170.29 L372.27,168.62 L371.06,167.27 L372.15,165.77 L373.81,166.50 L375.23,165.47 L375.04,163.66 L376.81,163.09 L377.72,164.66 L379.48,164.66 L380.39,163.09 L382.16,163.66 L381.97,165.47 L383.39,166.50 L385.05,165.77 L386.14,167.27 L384.93,168.62Z" fill="none" stroke="#f2f2f2" stroke-width="1.3" stroke-linejoin="round"/><circle cx="378.6" cy="171.6" r="4.4" fill="none" stroke="#f2f2f2" stroke-width="1.3"/>
<path d="M385.48,202.69 L387.25,203.07 L387.25,204.93 L385.48,205.31 L384.93,206.98 L386.14,208.33 L385.05,209.83 L383.39,209.10 L381.97,210.13 L382.16,211.94 L380.39,212.51 L379.48,210.94 L377.72,210.94 L376.81,212.51 L375.04,211.94 L375.23,210.13 L373.81,209.10 L372.15,209.83 L371.06,208.33 L372.27,206.98 L371.72,205.31 L369.95,204.93 L369.95,203.07 L371.72,202.69 L372.27,201.02 L371.06,199.67 L372.15,198.17 L373.81,198.90 L375.23,197.87 L375.04,196.06 L376.81,195.49 L377.72,197.06 L379.48,197.06 L380.39,195.49 L382.16,196.06 L381.97,197.87 L383.39,198.90 L385.05,198.17 L386.14,199.67 L384.93,201.02Z" fill="none" stroke="#f2f2f2" stroke-width="1.3" stroke-linejoin="round"/><circle cx="378.6" cy="204" r="4.4" fill="none" stroke="#f2f2f2" stroke-width="1.3"/>
<path d="M385.48,235.09 L387.25,235.47 L387.25,237.33 L385.48,237.71 L384.93,239.38 L386.14,240.73 L385.05,242.23 L383.39,241.50 L381.97,242.53 L382.16,244.34 L380.39,244.91 L379.48,243.34 L377.72,243.34 L376.81,244.91 L375.04,244.34 L375.23,242.53 L373.81,241.50 L372.15,242.23 L371.06,240.73 L372.27,239.38 L371.72,237.71 L369.95,237.33 L369.95,235.47 L371.72,235.09 L372.27,233.42 L371.06,232.07 L372.15,230.57 L373.81,231.30 L375.23,230.27 L375.04,228.46 L376.81,227.89 L377.72,229.46 L379.48,229.46 L380.39,227.89 L382.16,228.46 L381.97,230.27 L383.39,231.30 L385.05,230.57 L386.14,232.07 L384.93,233.42Z" fill="none" stroke="#f2f2f2" stroke-width="1.3" stroke-linejoin="round"/><circle cx="378.6" cy="236.4" r="4.4" fill="none" stroke="#f2f2f2" stroke-width="1.3"/>
<path d="M399,168.0 L402.6,171.6 L399,175.2" fill="none" stroke="#f2f2f2" stroke-width="1.3" stroke-linejoin="round" stroke-linecap="round" />
<path d="M399,200.4 L402.6,204 L399,207.6" fill="none" stroke="#f2f2f2" stroke-width="1.3" stroke-linejoin="round" stroke-linecap="round" />
<path d="M399,232.8 L402.6,236.4 L399,240.0" fill="none" stroke="#f2f2f2" stroke-width="1.3" stroke-linejoin="round" stroke-linecap="round" />
<clipPath id="thumbclip"><rect x="262" y="115" width="146" height="41"/></clipPath><g id="thumbs" clip-path="url(#thumbclip)">
<circle cx="262" cy="129" r="7.3" fill="none" stroke="#222" stroke-width="1.3"/>
<circle cx="262" cy="144.3" r="5.3" fill="none" stroke="#6a68e0" stroke-width="1"/>
<rect x="288.8" y="124" width="16" height="12" rx="1.5" fill="none" stroke="#222" stroke-width="1.4"/>
<rect x="291" y="138.5" width="11.7" height="11" fill="none" stroke="#6a68e0" stroke-width="1.1"/>
<path d="M325.2,122 L335,121.3 Q337.3,121.3 337.3,124 V147.5 Q337.3,149.5 335,149.3 L326.5,148.7 Q324.8,148.5 324.8,146.8 V123.5 Q324.8,122 325.2,122Z" fill="#bba8c8" stroke="#7d7bcc" stroke-width="1"/>
<rect x="265.7" y="121.7" width="11" height="11" fill="#57544b"/>
<text x="271.2" y="130.8" font-size="9.5" fill="#f4f4f4" text-anchor="middle">7</text>
<rect x="300.2" y="121.7" width="11" height="11" fill="#57544b"/>
<text x="305.7" y="130.8" font-size="9.5" fill="#f4f4f4" text-anchor="middle">8</text>
<rect x="335.2" y="121.7" width="11" height="11" fill="#57544b"/>
<text x="340.7" y="130.8" font-size="9.5" fill="#f4f4f4" text-anchor="middle">9</text>
</g>
<path d="M37.8,91.89999999999999 L40.4,94.6 L45.4,88.6" fill="none" stroke="#b5b5b5" stroke-width="1.0" stroke-linejoin="round" stroke-linecap="round" />
<path d="M37.8,140.5 L40.4,143.2 L45.4,137.2" fill="none" stroke="#b5b5b5" stroke-width="1.0" stroke-linejoin="round" stroke-linecap="round" />
<path d="M37.8,156.70000000000002 L40.4,159.4 L45.4,153.4" fill="none" stroke="#b5b5b5" stroke-width="1.0" stroke-linejoin="round" stroke-linecap="round" />
<path d="M37.8,172.9 L40.4,175.6 L45.4,169.6" fill="none" stroke="#b5b5b5" stroke-width="1.0" stroke-linejoin="round" stroke-linecap="round" />
<path d="M587.3,64.5 L597,74.3 M597,64.5 L587.3,74.3" fill="none" stroke="#f0f0f0" stroke-width="1.3" stroke-linejoin="round" stroke-linecap="round" />
<path d="M1287,67.3 L1291.3,71.5 L1295.6,67.3" fill="none" stroke="#f2f2f2" stroke-width="1.4" stroke-linejoin="round" stroke-linecap="round" />
<g id="rt">
<path d="M1308.8,57.2 H1336" fill="none" stroke="#8a8a8a" stroke-width="1.4" stroke-linejoin="round" stroke-linecap="round" stroke-dasharray="1.2 1.2" stroke-linecap="butt"/>
<path d="M1308.8,452.2 H1340" fill="none" stroke="#8a8a8a" stroke-width="1.4" stroke-linejoin="round" stroke-linecap="round" stroke-dasharray="1.2 1.2" stroke-linecap="butt"/>
<path d="M1314,84.2 L1330.2,68.8" fill="none" stroke="#f2f2f2" stroke-width="1.4" stroke-linejoin="round" stroke-linecap="round" />
<path d="M1314,116.6 L1327,103.5" fill="none" stroke="#f2f2f2" stroke-width="1.4" stroke-linejoin="round" stroke-linecap="round" />
<path d="M1330.6,100 L1328.6,107.5 L1323.2,102.1 Z" fill="#f2f2f2" stroke="#f2f2f2" stroke-width="0.8" stroke-linejoin="round" stroke-linecap="round" />
<path d="M1313.8,148.8 C1314.5,140 1321,133.8 1330.2,133" fill="none" stroke="#f2f2f2" stroke-width="1.4" stroke-linejoin="round" stroke-linecap="round" />
<path d="M1314,181.6 L1317.4,174.2 L1321.2,177 L1322,167.7 L1326,170.6 L1330.2,165.4" fill="none" stroke="#f2f2f2" stroke-width="1.4" stroke-linejoin="round" stroke-linecap="round" />
<path d="M1314,205.8 H1330.4 M1314,202.3 V209.3 M1330.4,202.3 V209.3" fill="none" stroke="#f2f2f2" stroke-width="1.3" stroke-linejoin="round" stroke-linecap="round" />
<path d="M1317.8,203.2 L1315,205.8 L1317.8,208.4 Z M1326.6,203.2 L1329.4,205.8 L1326.6,208.4 Z" fill="#f2f2f2" stroke="#f2f2f2" stroke-width="0.8" stroke-linejoin="round" stroke-linecap="round" />
<path d="M1313.8,232.6 H1330.6 V244 H1313.8 Z" fill="none" stroke="#f2f2f2" stroke-width="1.4" stroke-linejoin="round" stroke-linecap="round" />
<ellipse cx="1322" cy="270.8" rx="8.4" ry="6.1" fill="none" stroke="#f2f2f2" stroke-width="1.4"/>
<path d="M1313.8,296 H1329.4 L1323.6,303.5 L1329.6,310.7 H1313.8 Z" fill="none" stroke="#f2f2f2" stroke-width="1.4" stroke-linejoin="round" stroke-linecap="round" />
<path d="M1313.6,327 H1331" fill="none" stroke="#8d72c4" stroke-width="1.2" stroke-linejoin="round" stroke-linecap="round" />
<path d="M1314.5,327 v2.6 M1317.3,327 v2.6 M1320.1,327 v2.6 M1322.9,327 v2.6 M1325.7,327 v2.6 M1328.5,327 v2.6" fill="none" stroke="#8d72c4" stroke-width="1.0" stroke-linejoin="round" stroke-linecap="round" stroke-linecap="butt"/>
<path d="M1314.2,327 V345" fill="none" stroke="#8d72c4" stroke-width="1.2" stroke-linejoin="round" stroke-linecap="round" />
<path d="M1314.2,331.3 h2.4 M1314.2,334.1 h2.4 M1314.2,336.9 h2.4 M1314.2,339.7 h2.4 M1314.2,342.5 h2.4" fill="none" stroke="#8d72c4" stroke-width="1.0" stroke-linejoin="round" stroke-linecap="round" stroke-linecap="butt"/>
<path d="M1313.6,359.3 H1331" fill="none" stroke="#8d72c4" stroke-width="1.2" stroke-linejoin="round" stroke-linecap="round" />
<path d="M1314.5,359.3 v2.6 M1317.3,359.3 v2.6 M1320.1,359.3 v2.6 M1322.9,359.3 v2.6 M1325.7,359.3 v2.6 M1328.5,359.3 v2.6" fill="none" stroke="#8d72c4" stroke-width="1.0" stroke-linejoin="round" stroke-linecap="round" stroke-linecap="butt"/>
<path d="M1314.2,359.3 V377.3" fill="none" stroke="#8d72c4" stroke-width="1.2" stroke-linejoin="round" stroke-linecap="round" />
<path d="M1314.2,363.6 h2.4 M1314.2,366.40000000000003 h2.4 M1314.2,369.2 h2.4 M1314.2,372.0 h2.4 M1314.2,374.8 h2.4" fill="none" stroke="#8d72c4" stroke-width="1.0" stroke-linejoin="round" stroke-linecap="round" stroke-linecap="butt"/>
<path d="M1313.6,391.6 H1331" fill="none" stroke="#8d72c4" stroke-width="1.2" stroke-linejoin="round" stroke-linecap="round" />
<path d="M1314.5,391.6 v2.6 M1317.3,391.6 v2.6 M1320.1,391.6 v2.6 M1322.9,391.6 v2.6 M1325.7,391.6 v2.6 M1328.5,391.6 v2.6" fill="none" stroke="#8d72c4" stroke-width="1.0" stroke-linejoin="round" stroke-linecap="round" stroke-linecap="butt"/>
<path d="M1314.2,391.6 V409.6" fill="none" stroke="#8d72c4" stroke-width="1.2" stroke-linejoin="round" stroke-linecap="round" />
<path d="M1314.2,395.90000000000003 h2.4 M1314.2,398.70000000000005 h2.4 M1314.2,401.5 h2.4 M1314.2,404.3 h2.4 M1314.2,407.1 h2.4" fill="none" stroke="#8d72c4" stroke-width="1.0" stroke-linejoin="round" stroke-linecap="round" stroke-linecap="butt"/>
<path d="M1313.6,424 H1331" fill="none" stroke="#8d72c4" stroke-width="1.2" stroke-linejoin="round" stroke-linecap="round" />
<path d="M1314.5,424 v2.6 M1317.3,424 v2.6 M1320.1,424 v2.6 M1322.9,424 v2.6 M1325.7,424 v2.6 M1328.5,424 v2.6" fill="none" stroke="#8d72c4" stroke-width="1.0" stroke-linejoin="round" stroke-linecap="round" stroke-linecap="butt"/>
<path d="M1314.2,424 V442" fill="none" stroke="#8d72c4" stroke-width="1.2" stroke-linejoin="round" stroke-linecap="round" />
<path d="M1314.2,428.3 h2.4 M1314.2,431.1 h2.4 M1314.2,433.9 h2.4 M1314.2,436.7 h2.4 M1314.2,439.5 h2.4" fill="none" stroke="#8d72c4" stroke-width="1.0" stroke-linejoin="round" stroke-linecap="round" stroke-linecap="butt"/>
<path d="M1318.6,343.2 H1329.6 V332.2 H1324 L1318.6,337.2" fill="none" stroke="#f2f2f2" stroke-width="1.3" stroke-linejoin="round" stroke-linecap="round" />
<rect x="1317.1999999999998" y="341.8" width="2.8" height="2.8" fill="#f2f2f2"/>
<rect x="1328.1999999999998" y="341.8" width="2.8" height="2.8" fill="#f2f2f2"/>
<rect x="1328.1999999999998" y="330.8" width="2.8" height="2.8" fill="#f2f2f2"/>
<rect x="1322.6" y="330.8" width="2.8" height="2.8" fill="#f2f2f2"/>
<rect x="1317.1999999999998" y="335.8" width="2.8" height="2.8" fill="#f2f2f2"/>
<path d="M1317.8,376 V369.8 L1323.8,363.6 H1331.2 V376 Z" fill="none" stroke="#f2f2f2" stroke-width="1.3" stroke-linejoin="round" stroke-linecap="round" />
<path d="M1318.5,401.4 H1331 M1318.5,396.6 V406.2 M1331,396.6 V406.2" fill="none" stroke="#f2f2f2" stroke-width="1.3" stroke-linejoin="round" stroke-linecap="round" />
<path d="M1321.6,399.2 L1319.4,401.4 L1321.6,403.6 Z M1327.9,399.2 L1330.1,401.4 L1327.9,403.6 Z" fill="#f2f2f2" stroke="#f2f2f2" stroke-width="0.8" stroke-linejoin="round" stroke-linecap="round" />
<path d="M1320.3,429.5 V439.5 M1323.3,429.5 V439.5 M1326.3,429.5 V439.5 M1329.3,429.5 V439.5 M1317.6,437.5 L1332,431.5" fill="none" stroke="#f2f2f2" stroke-width="1.2" stroke-linejoin="round" stroke-linecap="round" />
<path d="M1317,463.6 H1333.8 V479.6 H1317 Z" fill="none" stroke="#f2f2f2" stroke-width="1.4" stroke-linejoin="round" stroke-linecap="round" />
<text x="1325.4" y="476.3" font-size="11.5" fill="#f2f2f2" text-anchor="middle">A</text>
<path d="M1317.5,511.7 L1322.3,504.5 L1326.3,510.8 Z" fill="none" stroke="#f2f2f2" stroke-width="1.2" stroke-linejoin="round" stroke-linecap="round" />
<path d="M1322.3,504.5 L1325.8,499.5 L1331.8,508 L1326.3,510.8 M1327.8,495.8 L1323.3,501.5 M1323.3,501.5 L1325.8,499.5 M1329.5,504.5 L1334,508.8 M1325.8,499.5 L1331.8,508" fill="none" stroke="#c9b043" stroke-width="1.2" stroke-linejoin="round" stroke-linecap="round" />
<path d="M1328,528.4 L1319.2,541.8 M1333.2,534 L1319.8,542.3" fill="none" stroke="#2f80c8" stroke-width="1.4" stroke-linejoin="round" stroke-linecap="round" />
<path d="M1322.3,535.5 L1325,539.2" fill="none" stroke="#2f80c8" stroke-width="1.4" stroke-linejoin="round" stroke-linecap="round" />
<path d="M1319.3,541.8 L1317.6,543.8" fill="none" stroke="#f2f2f2" stroke-width="2.0" stroke-linejoin="round" stroke-linecap="round" />
<path d="M1316.8,560.6 H1329.6 V566.6 H1316.8 Z M1329.6,566.6 L1333,569.8 L1331.3,573" fill="none" stroke="#f2f2f2" stroke-width="1.3" stroke-linejoin="round" stroke-linecap="round" />
<path d="M1316.8,574.8 q1.6,-2.4 3.2,0 q1.6,-2.4 3.2,0 q1.6,-2.4 3.2,0 q1.6,-2.4 3.2,0 q1.6,-2.4 3.2,0" fill="none" stroke="#f2f2f2" stroke-width="1.2" stroke-linejoin="round" stroke-linecap="round" />
<path d="M1325.20,594.40 A2.9,2.9 0 0 1 1329.87,596.33 A2.9,2.9 0 0 1 1331.80,601.00 A2.9,2.9 0 0 1 1329.87,605.67 A2.9,2.9 0 0 1 1325.20,607.60 A2.9,2.9 0 0 1 1320.53,605.67 A2.9,2.9 0 0 1 1318.60,601.00 A2.9,2.9 0 0 1 1320.53,596.33 A2.9,2.9 0 0 1 1325.20,594.40" fill="none" stroke="#f2f2f2" stroke-width="1.2" stroke-linejoin="round" stroke-linecap="round" />
<path d="M1316.8,625.3 H1329.6 V631 H1316.8 Z M1329.6,629.5 L1332.6,633.5 L1328.8,638.6" fill="none" stroke="#f2f2f2" stroke-width="1.3" stroke-linejoin="round" stroke-linecap="round" />
<path d="M1326.2,641.3 L1327.6,636.3 L1331,639 Z" fill="#f2f2f2" stroke="#f2f2f2" stroke-width="0.8" stroke-linejoin="round" stroke-linecap="round" />
<circle cx="1322.2" cy="660.3" r="2.9" fill="none" stroke="#f2f2f2" stroke-width="1.3"/>
<path d="M1320.6,662.8 V667.8 M1323.8,662.8 V667.8 M1313.8,671 V667.8 H1330.6 V671 Z M1313.8,673.6 H1330.6" fill="none" stroke="#f2f2f2" stroke-width="1.3" stroke-linejoin="round" stroke-linecap="round" />
<path d="M1333.8,664 L1337.2,667.4 L1340.6,664" fill="none" stroke="#f2f2f2" stroke-width="1.4" stroke-linejoin="round" stroke-linecap="round" />
<path d="M1316.9,690.5 H1333.3 V704.3 H1316.9 Z" fill="none" stroke="#f2f2f2" stroke-width="1.4" stroke-linejoin="round" stroke-linecap="round" />
<circle cx="1322.6" cy="694.3" r="1.3" fill="#f2f2f2"/>
<path d="M1317.3,702.3 L1322,697.3 L1324.5,700 L1328.6,695.6 L1333,700.3" fill="none" stroke="#f2f2f2" stroke-width="1.2" stroke-linejoin="round" stroke-linecap="round" />
<path d="M1322,724.6 H1334.8 V739 H1320 V727" fill="none" stroke="#f2f2f2" stroke-width="1.4" stroke-linejoin="round" stroke-linecap="round" stroke-dasharray="1.6 1.6" stroke-linecap="butt"/>
<path d="M1316.4,724.6 H1323 M1319.7,721.3 V728" fill="none" stroke="#f2f2f2" stroke-width="1.4" stroke-linejoin="round" stroke-linecap="round" />
</g>
<rect x="68" y="806" width="312" height="3.4" rx="1.7" fill="#444"/>
<circle cx="62.2" cy="807.7" r="5.6" fill="#9b9b9b"/>
<path d="M44,803 L49.8,812.3 H38.2 Z" fill="none" stroke="#f2f2f2" stroke-width="1.5" stroke-linejoin="round" stroke-linecap="round" />
<path d="M396.5,800.3 L405.8,815.8 H387.2 Z" fill="none" stroke="#f2f2f2" stroke-width="1.5" stroke-linejoin="round" stroke-linecap="round" />
<g id="nav">
<path d="M416,793.5 H431.5 V808.5 H416 Z M416,795.5 H431.5" fill="none" stroke="#5e5e5e" stroke-width="1.2" stroke-linejoin="round" stroke-linecap="round" />
<path d="M448.3,793.5 H463.5 V808.5 H448.3 Z M448.3,795.5 H463.5 M455.9,795.5 V808.5" fill="none" stroke="#f2f2f2" stroke-width="1.3" stroke-linejoin="round" stroke-linecap="round" />
<path d="M480.3,793.5 H495.8 V808.5 H480.3 Z M480.3,795.5 H495.8" fill="none" stroke="#f2f2f2" stroke-width="1.3" stroke-linejoin="round" stroke-linecap="round" />
<rect x="480.3" y="800.3" width="15.5" height="3.2" fill="#9a9a9a"/>
<path d="M507,790.5 V809.5" fill="none" stroke="#555" stroke-width="1.2" stroke-linejoin="round" stroke-linecap="round" />
<path d="M518.5,793 H526.8 L531.8,798 V809 H518.5 Z M526.8,793 V798 H531.8" fill="none" stroke="#f2f2f2" stroke-width="1.2" stroke-linejoin="round" stroke-linecap="round" />
<path d="M525,798.3 V807 M520.8,802.6 H529.4 M523.7,799.8 L525,798.3 L526.3,799.8 M523.7,805.6 L525,807 L526.3,805.6 M522.2,801.4 L520.8,802.6 L522.2,803.9 M528,801.4 L529.4,802.6 L528,803.9" fill="none" stroke="#f2f2f2" stroke-width="0.9" stroke-linejoin="round" stroke-linecap="round" />
<path d="M550,792.8 V795.5 H564.3 V792.8" fill="none" stroke="#f2f2f2" stroke-width="1.2" stroke-linejoin="round" stroke-linecap="round" />
<path d="M551,806 V799 H559 L563.5,803 V806 M559,799 V803 H563.5" fill="none" stroke="#f2f2f2" stroke-width="1.2" stroke-linejoin="round" stroke-linecap="round" />
<path d="M550,807.8 H564.5 M550,805.8 V809.8 M564.5,805.8 V809.8" fill="none" stroke="#f2f2f2" stroke-width="1.1" stroke-linejoin="round" stroke-linecap="round" />
<path d="M586.7,801.5 L584.2,799 Q583,798 584,797 Q585.2,796.2 586.3,797.3 L587.6,798.8 V794.3 Q587.6,793 588.8,793 Q590,793 590,794.3 V793 Q590,791.8 591.2,791.8 Q592.4,791.8 592.4,793 V793.8 Q592.4,792.6 593.6,792.6 Q594.8,792.6 594.8,793.8 V795.3 Q594.8,794.2 596,794.2 Q597.2,794.2 597.2,795.5 V802 Q597.2,805 595.5,807 V809 H589 V807.2 Q587.5,805 586.7,801.5 Z" fill="none" stroke="#f2f2f2" stroke-width="1.1" stroke-linejoin="round" stroke-linecap="round" />
<path d="M590,794 V799.5 M592.4,793.8 V799.5 M594.8,795 V799.5" fill="none" stroke="#f2f2f2" stroke-width="0.9" stroke-linejoin="round" stroke-linecap="round" />
<path d="M618,793 V808.3 L621.8,804.8 L624.3,810.3 L626.6,809.3 L624.1,803.9 L629,803.6 Z" fill="none" stroke="#f2f2f2" stroke-width="1.2" stroke-linejoin="round" stroke-linecap="round" />
<path d="M650.3,792.8 V809.3 M648,792.8 H652.6 M648,809.3 H652.6" fill="none" stroke="#f2f2f2" stroke-width="1.2" stroke-linejoin="round" stroke-linecap="round" />
<text x="658.3" y="806" font-size="10.5" fill="#f2f2f2" text-anchor="middle">A</text>
<circle cx="685.3" cy="799" r="5.6" fill="none" stroke="#f2f2f2" stroke-width="1.3"/>
<path d="M689.5,803.2 L696,809.8" fill="none" stroke="#f2f2f2" stroke-width="1.5" stroke-linejoin="round" stroke-linecap="round" />
<path d="M682.8,797.8 H687.8 M685.3,795.4 V800.2 M682.8,802 H687.8" fill="none" stroke="#f2f2f2" stroke-width="1.0" stroke-linejoin="round" stroke-linecap="round" />
<path d="M715.5,796.5 V806.5" fill="none" stroke="#5e5e5e" stroke-width="1.2" stroke-linejoin="round" stroke-linecap="round" />
<path d="M724,796.8 V806.2 L717.5,801.5 Z" fill="none" stroke="#5e5e5e" stroke-width="1.1" stroke-linejoin="round" stroke-linecap="round" />
<path d="M755,796.8 V806.2 L748.8,801.5 Z" fill="none" stroke="#5e5e5e" stroke-width="1.1" stroke-linejoin="round" stroke-linecap="round" />
<path d="M1012.3,796.8 V806.2 L1018.5,801.5 Z" fill="none" stroke="#5e5e5e" stroke-width="1.1" stroke-linejoin="round" stroke-linecap="round" />
<path d="M1045.3,799.5 L1049.3,803.5 L1053.3,799.5" fill="none" stroke="#f2f2f2" stroke-width="1.5" stroke-linejoin="round" stroke-linecap="round" />
</g>
<g id="status">
<path d="M818.9,826.2 V842.3 M823.7,826.2 V842.3 M828.5,826.2 V842.3 M815.9,829.6 H831.6 M815.9,834.3 H831.6 M815.9,839 H831.6" fill="none" stroke="#f2f2f2" stroke-width="1.3" stroke-linejoin="round" stroke-linecap="round" stroke-linecap="butt"/>
<path d="M851.6,826.2 V842.3 M856.4,826.2 V833 M861,826.2 V831.5 M848.4,829.6 H864.5 M848.4,834.3 H855.5 M848.4,839 H855.5" fill="none" stroke="#f2f2f2" stroke-width="1.3" stroke-linejoin="round" stroke-linecap="round" stroke-linecap="butt"/>
<path d="M856.6,833.5 H861.2 A4.4,4.4 0 0 1 861.2,842.3 H856.6 V839.7 H861.0 A1.8,1.8 0 0 0 861.0,836.1 H856.6 Z" fill="none" stroke="#f2f2f2" stroke-width="1.1" stroke-linejoin="round" stroke-linecap="round" />
<path d="M888.5,842.3 H882.3 V826.8 H890.5 L895.3,831.4 V832.3 M890.5,826.8 V831.4 H895.3" fill="none" stroke="#f2f2f2" stroke-width="1.3" stroke-linejoin="round" stroke-linecap="round" />
<path d="M889.3,833.5 H893.9 A4.4,4.4 0 0 1 893.9,842.3 H889.3 V839.7 H893.6999999999999 A1.8,1.8 0 0 0 893.6999999999999,836.1 H889.3 Z" fill="none" stroke="#f2f2f2" stroke-width="1.1" stroke-linejoin="round" stroke-linecap="round" />
<path d="M913.3,841.7 L915,836.6 L923.3,827.3 L927.2,830.8 L924.8,833.4 M915,836.6 L918.3,839.7 L913.3,841.7" fill="none" stroke="#f2f2f2" stroke-width="1.2" stroke-linejoin="round" stroke-linecap="round" />
<path d="M913.3,841.7 L914.6,840.4" fill="none" stroke="#f2f2f2" stroke-width="2.2" stroke-linejoin="round" stroke-linecap="round" />
<path d="M921.3,833.5 H925.9 A4.4,4.4 0 0 1 925.9,842.3 H921.3 V839.7 H925.6999999999999 A1.8,1.8 0 0 0 925.6999999999999,836.1 H921.3 Z" fill="none" stroke="#f2f2f2" stroke-width="1.1" stroke-linejoin="round" stroke-linecap="round" />
<path d="M946,841.7 L947.6,836.6 L956.4,826.9 L960.4,830.5 L958.6,832.4 M947.6,836.6 L951,839.7 L946,841.7" fill="none" stroke="#f2f2f2" stroke-width="1.2" stroke-linejoin="round" stroke-linecap="round" />
<path d="M946,841.7 L947.3,840.4" fill="none" stroke="#f2f2f2" stroke-width="2.2" stroke-linejoin="round" stroke-linecap="round" />
<path d="M961.3,835.8 A3.6,3.6 0 1 1 955.3,835.3" fill="none" stroke="#2f80c8" stroke-width="1.5" stroke-linejoin="round" stroke-linecap="round" />
<path d="M959.3,833.2 L961.6,836.2 L958,837" fill="none" stroke="#2f80c8" stroke-width="1.2" stroke-linejoin="round" stroke-linecap="round" />
<path d="M977.6,826.3 H994.6 V842.3 H977.6 Z M977.6,829 H994.6" fill="none" stroke="#f2f2f2" stroke-width="1.4" stroke-linejoin="round" stroke-linecap="round" />
<path d="M980.6,833.8 H991 M988.6,831.6 L991,833.8 L988.6,836 M991.6,838.6 H981.2 M983.6,836.4 L981.2,838.6 L983.6,840.8" fill="none" stroke="#f2f2f2" stroke-width="1.2" stroke-linejoin="round" stroke-linecap="round" />
<path d="M1004.8,832.8 L1008.7,836.7 L1012.6,832.8" fill="none" stroke="#f2f2f2" stroke-width="1.5" stroke-linejoin="round" stroke-linecap="round" />
</g>
<path d="M148.8,223.3 V236.3 L151.7,233.5 L153.9,238.5 L156.1,237.5 L153.9,232.7 L158.1,232.5 Z" fill="#fff" stroke="#222" stroke-width="0.6" stroke-linejoin="round"/>
</svg>
</div>
</body></html>
